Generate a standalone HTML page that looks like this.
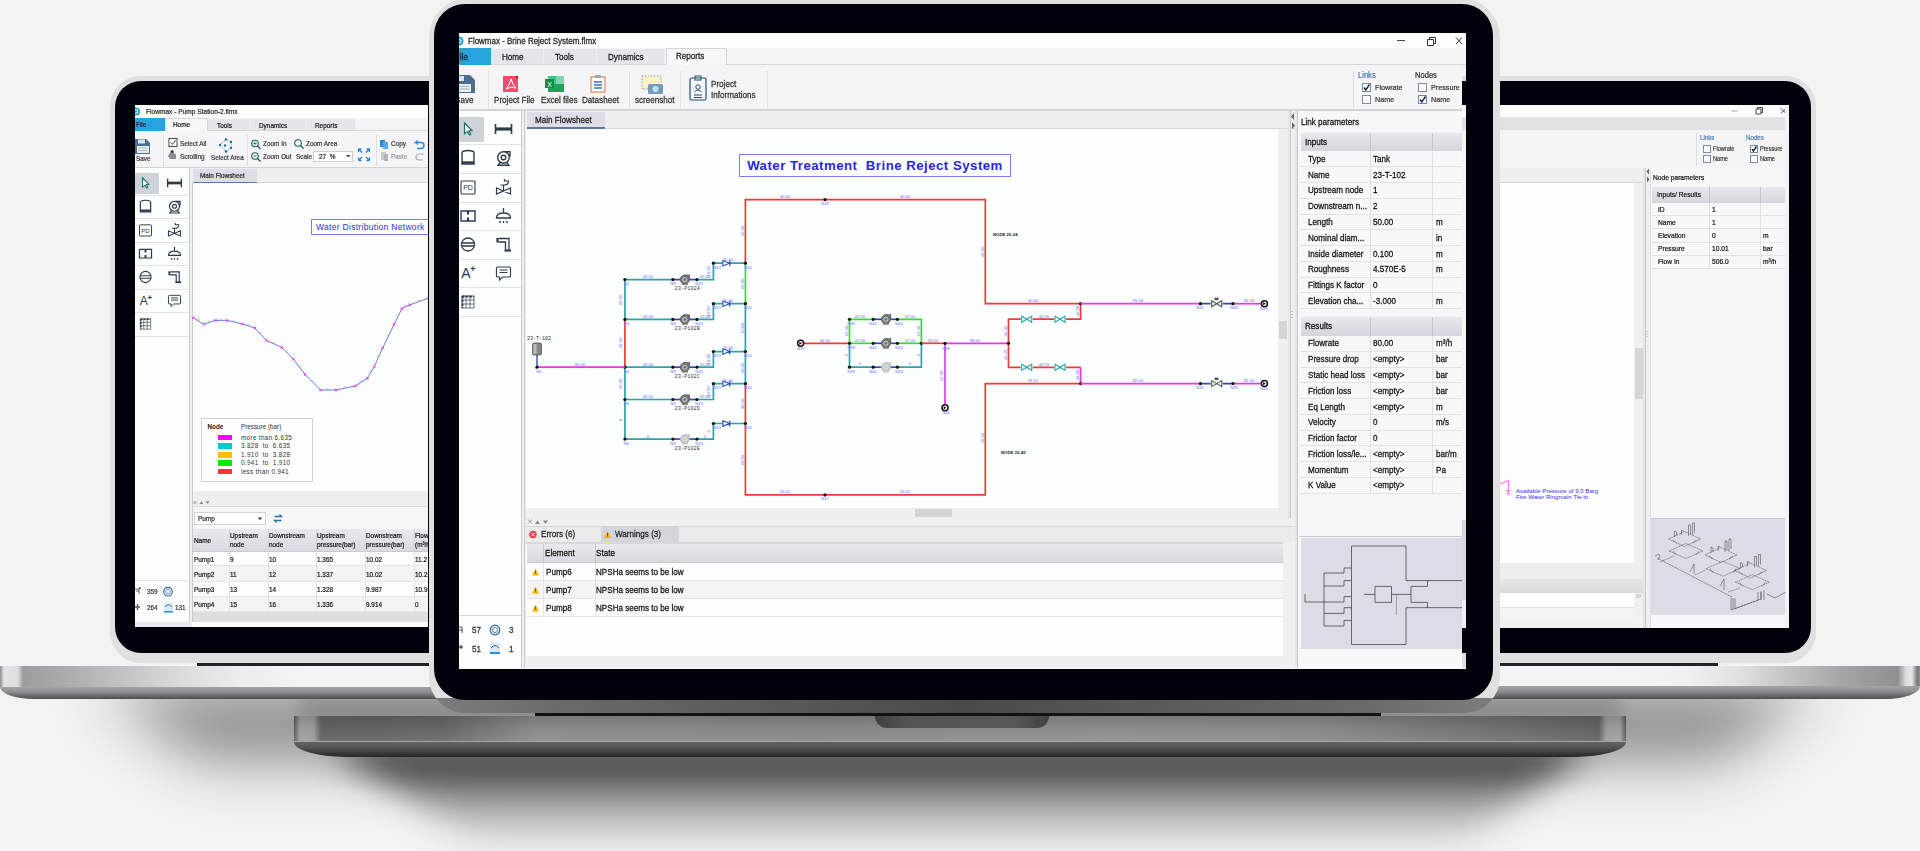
<!DOCTYPE html>
<html><head><meta charset="utf-8">
<style>
html,body{margin:0;padding:0;}
body{width:1920px;height:851px;overflow:hidden;background:#f4f3f1;position:relative;font-family:"Liberation Sans",sans-serif;}
.a{position:absolute;}
.t{position:absolute;white-space:nowrap;font-family:"Liberation Sans",sans-serif;line-height:1;}
</style></head><body>

<!-- ============ SHADOWS ============ -->
<svg class="a" style="left:0;top:666px;" width="1920" height="185" viewBox="0 666 1920 185">
  <defs>
    <filter id="sb1" x="-30%" y="-150%" width="160%" height="400%"><feGaussianBlur stdDeviation="30"/></filter>
    <filter id="sb2" x="-30%" y="-150%" width="160%" height="400%"><feGaussianBlur stdDeviation="17"/></filter>
    <filter id="sb3" x="-30%" y="-150%" width="160%" height="400%"><feGaussianBlur stdDeviation="9"/></filter>
    <linearGradient id="sg1" x1="0" y1="0" x2="0" y2="1">
      <stop offset="0" stop-color="#000" stop-opacity="0.9"/>
      <stop offset="0.35" stop-color="#000" stop-opacity="0.45"/>
      <stop offset="1" stop-color="#000" stop-opacity="0"/>
    </linearGradient>
  </defs>
  <polygon points="100,688 1820,688 1720,760 200,760" fill="rgba(0,0,0,0.44)" filter="url(#sb1)"/>
  <polygon points="330,748 1590,748 1450,850 490,850" fill="url(#sg1)" filter="url(#sb2)"/>
  <rect x="300" y="694" width="1320" height="24" fill="rgba(0,0,0,0.16)" filter="url(#sb3)"/>
</svg>
<!-- ============ LEFT LAPTOP ============ -->
<div class="a" id="left-base" style="left:0;top:666px;width:900px;height:33px;">
  <div class="a" style="left:0;top:0;width:900px;height:21px;background:linear-gradient(90deg,#8c8d91 0px,#e4e5e7 4px,#dcdde0 18px,#9b9ca0 23px,#b4b5b8 90px,#d6d7d9 170px,#eceded 240px,#f4f4f4 300px);"></div>
  <div class="a" style="left:0;top:21px;width:900px;height:12px;background:linear-gradient(180deg,#a2a4a8 0%,#8f9094 40%,#4c4d51 100%);border-bottom-left-radius:34px 12px;"></div>
</div>
<div class="a" style="left:197px;top:663px;width:600px;height:3px;background:#23232a;"></div>
<div class="a" id="left-rim" style="left:110px;top:76px;width:700px;height:587px;background:#e0e0e0;border-radius:31px;"></div>
<div class="a" id="left-bezel" style="left:115px;top:81px;width:700px;height:572px;background:#02020d;border-radius:26px;"></div>
<div class="a" id="left-screen" style="left:135px;top:105px;width:293px;height:522px;background:#fbfcfc;overflow:hidden;"><div class="a" style="left:-135px;top:-105px;width:1920px;height:851px;">
<div class="a" style="left:135px;top:105px;width:293px;height:13px;background:#fdfdfe;"></div><svg class="a" style="left:0px;top:0px;overflow:visible" width="1920" height="851" viewBox="0 0 1920 851"><circle cx="136" cy="111.5" r="4" fill="#2a9fd8"/><circle cx="136" cy="111.5" r="1.8" fill="none" stroke="#fff" stroke-width="0.9"/></svg><div class="t" style="left:145.5px;top:108.17px;font-size:7.415730337078651px;color:#222;transform:scaleX(0.890);transform-origin:0 0;-webkit-text-stroke:0.208px #222;">Flowmax - Pump Station-2.flmx</div><div class="a" style="left:135px;top:118px;width:293px;height:13px;background:#f4f4f7;"></div><div class="a" style="left:135px;top:130px;width:293px;height:1px;background:#d7d8dc;"></div><div class="a" style="left:135px;top:118px;width:30px;height:13px;background:#29a3dd;"></div><div class="t" style="left:135.5px;top:121.48px;font-size:7.191011235955057px;color:#10233a;transform:scaleX(0.890);transform-origin:0 0;-webkit-text-stroke:0.201px #10233a;">File</div><div class="a" style="left:165px;top:118px;width:43px;height:13px;background:#f7f7fa;border:1px solid #d5d6da;border-bottom:none;box-sizing:border-box;"></div><div class="t" style="left:172.7px;top:120.98px;font-size:7.191011235955057px;color:#111;transform:scaleX(0.890);transform-origin:0 0;-webkit-text-stroke:0.201px #111;">Home</div><div class="a" style="left:208px;top:119px;width:43px;height:11px;background:#e5e6eb;border-right:1px solid #eef0f3;box-sizing:border-box;"></div><div class="t" style="left:216.8px;top:121.78px;font-size:7.191011235955057px;color:#111;transform:scaleX(0.890);transform-origin:0 0;-webkit-text-stroke:0.201px #111;">Tools</div><div class="a" style="left:251px;top:119px;width:56px;height:11px;background:#e5e6eb;border-right:1px solid #eef0f3;box-sizing:border-box;"></div><div class="t" style="left:259px;top:121.78px;font-size:7.191011235955057px;color:#111;transform:scaleX(0.890);transform-origin:0 0;-webkit-text-stroke:0.201px #111;">Dynamics</div><div class="a" style="left:307px;top:119px;width:49px;height:11px;background:#e5e6eb;border-right:1px solid #eef0f3;box-sizing:border-box;"></div><div class="t" style="left:314.6px;top:121.78px;font-size:7.191011235955057px;color:#111;transform:scaleX(0.890);transform-origin:0 0;-webkit-text-stroke:0.201px #111;">Reports</div><div class="a" style="left:135px;top:131px;width:293px;height:36px;background:#f5f5f8;"></div><div class="a" style="left:135px;top:166.5px;width:293px;height:1.5px;background:#d3d4d8;"></div><div class="a" style="left:162.5px;top:135px;width:1px;height:31px;background:#dfe0e4;"></div><div class="a" style="left:246.5px;top:135px;width:1px;height:31px;background:#dfe0e4;"></div><div class="a" style="left:375.5px;top:135px;width:1px;height:31px;background:#dfe0e4;"></div><svg class="a" style="left:0px;top:0px;overflow:visible" width="1920" height="851" viewBox="0 0 1920 851"><path d="M131,139 H146 L150,143 V154 H131 Z" fill="#4e6e8e"/><rect x="138" y="139.5" width="7" height="4" fill="#dbe4ee"/><rect x="137" y="146" width="12" height="7" fill="#e9eef3"/><path d="M138.5,148 H147.5 M138.5,150.5 H147.5" stroke="#8aa" stroke-width="0.7"/></svg><div class="t" style="left:135.5px;top:155.28px;font-size:7.191011235955057px;color:#333;transform:scaleX(0.890);transform-origin:0 0;-webkit-text-stroke:0.201px #333;">Save</div><svg class="a" style="left:0px;top:0px;overflow:visible" width="1920" height="851" viewBox="0 0 1920 851"><rect x="169" y="138.5" width="8" height="8" fill="#fff" stroke="#444" stroke-width="1"/><path d="M171,142.5 L172.5,144.5 L175.5,140" stroke="#333" stroke-width="0.9" fill="none"/><path d="M171,151 q1.5,-1 3,0 v3 h2 v5 h-6 l-2,-3 z" fill="#8a8f96"/><circle cx="172" cy="151.5" r="1.3" fill="#333"/></svg><div class="t" style="left:180px;top:139.68px;font-size:7.191011235955057px;color:#333;transform:scaleX(0.890);transform-origin:0 0;-webkit-text-stroke:0.201px #333;">Select All</div><div class="t" style="left:180px;top:153.48px;font-size:7.191011235955057px;color:#333;transform:scaleX(0.890);transform-origin:0 0;-webkit-text-stroke:0.201px #333;">Scrolling</div><svg class="a" style="left:0px;top:0px;overflow:visible" width="1920" height="851" viewBox="0 0 1920 851"><path d="M226,139.5 L231,142 L231,148 L226,151.5 L220,145 Z" fill="none" stroke="#1f6f8a" stroke-width="0.7" stroke-dasharray="1,1"/><circle cx="226" cy="139.5" r="1.2" fill="#1f6f8a"/><circle cx="231" cy="142" r="1.2" fill="#1f6f8a"/><circle cx="231" cy="148" r="1.2" fill="#1f6f8a"/><circle cx="226" cy="151.5" r="1.2" fill="#1f6f8a"/><circle cx="220" cy="145" r="1.2" fill="#1f6f8a"/><circle cx="225" cy="145.5" r="1.2" fill="#1f6f8a"/></svg><div class="t" style="left:210.8px;top:154.48px;font-size:7.191011235955057px;color:#333;transform:scaleX(0.890);transform-origin:0 0;-webkit-text-stroke:0.201px #333;">Select Area</div><svg class="a" style="left:0px;top:0px;overflow:visible" width="1920" height="851" viewBox="0 0 1920 851"><circle cx="255" cy="143.5" r="3.3" fill="none" stroke="#1f6060" stroke-width="1.1"/><path d="M257.5,146 L260.5,149" stroke="#1f6060" stroke-width="1.4"/><path d="M253.3,143.5 h3.4 M255,141.8 v3.4" stroke="#1f6060" stroke-width="0.8"/><circle cx="255" cy="156" r="3.3" fill="none" stroke="#1f6060" stroke-width="1.1"/><path d="M257.5,158.5 L260.5,161.5" stroke="#1f6060" stroke-width="1.4"/><path d="M253.3,156 h3.4" stroke="#1f6060" stroke-width="0.8"/><circle cx="298" cy="143" r="3.3" fill="none" stroke="#1f6060" stroke-width="1.1"/><path d="M300.5,145.5 L303.5,148.5" stroke="#1f6060" stroke-width="1.4"/></svg><div class="t" style="left:262.5px;top:140.48px;font-size:7.191011235955057px;color:#333;transform:scaleX(0.890);transform-origin:0 0;-webkit-text-stroke:0.201px #333;">Zoom In</div><div class="t" style="left:262.5px;top:153.48px;font-size:7.191011235955057px;color:#333;transform:scaleX(0.890);transform-origin:0 0;-webkit-text-stroke:0.201px #333;">Zoom Out</div><div class="t" style="left:305.5px;top:139.78px;font-size:7.191011235955057px;color:#333;transform:scaleX(0.890);transform-origin:0 0;-webkit-text-stroke:0.201px #333;">Zoom Area</div><div class="t" style="left:295.5px;top:153.48px;font-size:7.191011235955057px;color:#333;transform:scaleX(0.890);transform-origin:0 0;-webkit-text-stroke:0.201px #333;">Scale</div><div class="a" style="left:313px;top:151px;width:40px;height:11px;background:#fff;border:1px solid #cfd0d4;box-sizing:border-box;"></div><div class="t" style="left:318.8px;top:152.98px;font-size:7.191011235955057px;color:#222;transform:scaleX(0.890);transform-origin:0 0;-webkit-text-stroke:0.201px #222;">27 &nbsp;%</div><svg class="a" style="left:0px;top:0px;overflow:visible" width="1920" height="851" viewBox="0 0 1920 851"><path d="M346,155 h4.5 l-2.25,2.5 z" fill="#444"/><path d="M358.5,149 l3.5,3.5 M358.5,149 h3 M358.5,149 v3 M369.5,149 l-3.5,3.5 M369.5,149 h-3 M369.5,149 v3 M358.5,160.5 l3.5,-3.5 M358.5,160.5 h3 M358.5,160.5 v-3 M369.5,160.5 l-3.5,-3.5 M369.5,160.5 h-3 M369.5,160.5 v-3" stroke="#2a86d6" stroke-width="1.3" fill="none"/><rect x="380" y="140" width="5" height="7" fill="#2a86d6"/><rect x="383" y="142" width="5" height="7" fill="#5aaae6"/><rect x="381" y="152" width="5" height="8" fill="#c6c8cc"/><rect x="384" y="154" width="4" height="7" fill="#b0b3b8"/><path d="M416,142.5 h5 a3,3 0 0 1 0,6 h-4" stroke="#2a86d6" stroke-width="1.3" fill="none"/><path d="M418,140.5 l-3,2 l3,2" stroke="#2a86d6" stroke-width="1.1" fill="none"/><path d="M424,154 h-5 a3,3 0 0 0 0,6 h4" stroke="#a8b0b8" stroke-width="1.1" fill="none"/></svg><div class="t" style="left:391px;top:140.48px;font-size:7.191011235955057px;color:#333;transform:scaleX(0.890);transform-origin:0 0;-webkit-text-stroke:0.201px #333;">Copy</div><div class="t" style="left:391px;top:153.48px;font-size:7.191011235955057px;color:#9a9a9a;transform:scaleX(0.890);transform-origin:0 0;-webkit-text-stroke:0.201px #9a9a9a;">Paste</div><div class="a" style="left:135px;top:168px;width:293px;height:459px;background:#efeff1;"></div><div class="a" style="left:135px;top:168px;width:54px;height:454px;background:#fcfdfd;"></div><div class="a" style="left:189px;top:168px;width:1px;height:459px;background:#c9cacc;"></div><div class="a" style="left:190px;top:168px;width:1.5px;height:459px;background:#f0f0f0;"></div><div class="a" style="left:191.5px;top:168px;width:0.8px;height:459px;background:#c9cacc;"></div><div class="a" style="left:135px;top:172.6px;width:23.5px;height:21px;background:#cdd3d6;"></div><div class="a" style="left:135px;top:195px;width:54px;height:1px;background:#e3e4e6;"></div><div class="a" style="left:135px;top:218.3px;width:54px;height:1px;background:#e3e4e6;"></div><div class="a" style="left:135px;top:242px;width:54px;height:1px;background:#e3e4e6;"></div><div class="a" style="left:135px;top:265.3px;width:54px;height:1px;background:#e3e4e6;"></div><div class="a" style="left:135px;top:288.6px;width:54px;height:1px;background:#e3e4e6;"></div><div class="a" style="left:135px;top:312.4px;width:54px;height:1px;background:#e3e4e6;"></div><div class="a" style="left:135px;top:335.6px;width:54px;height:1px;background:#e3e4e6;"></div><div class="a" style="left:135px;top:579.6px;width:54px;height:1px;background:#e3e4e6;"></div><svg class="a" style="left:0px;top:0px;overflow:visible" width="1920" height="851" viewBox="0 0 1920 851"><g transform="translate(145.5,183) scale(0.86)"><path d="M-3.5,-6 L4,1.5 L1,1.8 L2.8,5.3 L1.4,6 L-0.4,2.6 L-3.5,4.6 Z" fill="#fff" stroke="#1f6f6a" stroke-width="1.2"/></g><g transform="translate(174.5,183) scale(0.86)"><path d="M-8,-5 V5 M8,-5 V5" stroke="#2e3b4b" fill="none" stroke-width="1.6"/></g><g transform="translate(174.5,183) scale(0.86)"><path d="M-8,0 H8" stroke="#2e3b4b" fill="none" stroke-width="3.2"/></g><g transform="translate(145.5,206.7) scale(0.86)"><path d="M-6,-5 Q-6,-7.5 0,-7.5 Q6,-7.5 6,-5 V6 H-6 Z" stroke="#2e3b4b" fill="none" stroke-width="1.4"/></g><g transform="translate(145.5,206.7) scale(0.86)"><path d="M-6,4.5 H6" stroke="#2e3b4b" fill="none" stroke-width="2.4"/></g><g transform="translate(174.5,206.7) scale(0.86)"><path d="M-5.8,-0.5 a5.8,5.8 0 1 0 11.6,0 a5.8,5.8 0 1 0 -11.6,0 M0,-6.3 H6.5 V-2.2 H5 M-2.3,-0.5 a2.3,2.3 0 1 0 4.6,0 a2.3,2.3 0 1 0 -4.6,0 M-3.5,4.6 L-5.5,7.3 H5.5 L3.5,4.6" stroke="#2e3b4b" fill="none" stroke-width="1.4"/></g><g transform="translate(145.5,230) scale(0.86)"><path d="M-6,-6 H6 Q7,-6 7,-5 V6 Q7,7 6,7 H-6 Q-7,7 -7,6 V-5 Q-7,-6 -6,-6 Z" stroke="#2e3b4b" fill="none" stroke-width="1.1"/></g><text x="145.5" y="232.6" font-size="6.02" font-family="Liberation Sans" text-anchor="middle" fill="#2e3b4b">PD</text><g transform="translate(174.5,230) scale(0.86)"><path d="M-7,1 L7,7 V1 L-7,7 Z M0,4 V-2 M-3,-2 H3 M1,-2 Q5,-2 5,-6 H1 V-8" stroke="#2e3b4b" fill="none" stroke-width="1.2"/></g><g transform="translate(145.5,253.7) scale(0.86)"><path d="M-7,-5 H7 V5 H-7 Z" stroke="#2e3b4b" fill="none" stroke-width="1.4"/></g><g transform="translate(145.5,253.7) scale(0.86)"><path d="M0,-5 V-1.5 M0,1.5 V5" stroke="#2e3b4b" fill="none" stroke-width="2.2"/></g><g transform="translate(174.5,253.7) scale(0.86)"><path d="M0,-8 V-3 M-7,2 Q-7,-3 0,-3 Q7,-3 7,2 Z M-3,5 L-4,7 M0,5 V7 M3,5 L4,7" stroke="#2e3b4b" fill="none" stroke-width="1.3"/></g><g transform="translate(145.5,277) scale(0.86)"><path d="M-6.5,0 A6.5,6.5 0 1 0 6.5,0 A6.5,6.5 0 1 0 -6.5,0 M-6.5,-1.5 H6.5 M-6.5,1.5 H6.5" stroke="#2e3b4b" fill="none" stroke-width="1.3"/></g><g transform="translate(174.5,277) scale(0.86)"><path d="M-6,-6.5 V-2" stroke="#2e3b4b" fill="none" stroke-width="2.2"/></g><g transform="translate(174.5,277) scale(0.86)"><path d="M-5,-6 H5.5 V5 M-5,-2.5 H2 V5" stroke="#2e3b4b" fill="none" stroke-width="1.3"/></g><g transform="translate(174.5,277) scale(0.86)"><path d="M1,6 H7.5" stroke="#2e3b4b" fill="none" stroke-width="2.2"/></g><text x="143.78" y="304.8" font-size="12.04" font-family="Liberation Sans" text-anchor="middle" fill="#2e3b4b">A</text><text x="149.8" y="299.64" font-size="7.74" font-family="Liberation Sans" font-weight="bold" text-anchor="middle" fill="#2e3b4b">+</text><g transform="translate(174.5,300.5) scale(0.86)"><path d="M-6,-6 H6 Q7,-6 7,-5 V3 Q7,4 6,4 H-1 L-4,7 V4 H-6 Q-7,4 -7,3 V-5 Q-7,-6 -6,-6 Z M-4,-3 H4 M-4,-0.5 H4" stroke="#2e3b4b" fill="none" stroke-width="1.1"/></g><g transform="translate(145.5,324) scale(0.86)"><path d="M-6,-6 H6 V6 H-6 Z M-6,-2 H6 M-6,2 H6 M-2,-6 V6 M2,-6 V6" stroke="#2e3b4b" fill="none" stroke-width="0.7"/></g><g transform="translate(145.5,324) scale(0.86)"><path d="M-5.5,-6 V6 M-6,-5.5 H6" stroke="#2e3b4b" fill="none" stroke-width="1.8" stroke-dasharray="2.5,1.2"/></g></svg><div class="a" style="left:135px;top:622px;width:56px;height:5px;background:#e9e9f1;"></div><svg class="a" style="left:0px;top:0px;overflow:visible" width="1920" height="851" viewBox="0 0 1920 851"><path d="M135,589 h4 v5 M136,591 h3" stroke="#556" stroke-width="0.9" fill="none"/><path d="M139,587.5 h2 v1.5 h-2z" fill="#556"/><circle cx="168" cy="591.7" r="4.3" fill="none" stroke="#2b5d9a" stroke-width="1.1"/><circle cx="168" cy="591.7" r="2.3" fill="none" stroke="#2b5d9a" stroke-width="0.7"/><path d="M135,607 h5 M137.5,604 v6" stroke="#556" stroke-width="1.4"/><rect x="164" y="603" width="9" height="9" fill="#dbe8f5"/><path d="M165,607 Q168.5,602.5 172,607" stroke="#2b5d9a" stroke-width="0.9" fill="none"/><rect x="164" y="611" width="9" height="1.6" fill="#2a8ee0"/></svg><div class="t" style="left:147px;top:588.28px;font-size:7.191011235955057px;color:#333;transform:scaleX(0.890);transform-origin:0 0;-webkit-text-stroke:0.201px #333;">359</div><div class="t" style="left:147px;top:603.78px;font-size:7.191011235955057px;color:#333;transform:scaleX(0.890);transform-origin:0 0;-webkit-text-stroke:0.201px #333;">264</div><div class="t" style="left:174.5px;top:603.78px;font-size:7.191011235955057px;color:#333;transform:scaleX(0.890);transform-origin:0 0;-webkit-text-stroke:0.201px #333;">131</div><div class="a" style="left:192px;top:168px;width:236px;height:15px;background:#efeff1;"></div><div class="a" style="left:193px;top:169px;width:64px;height:13px;background:#dcdde6;"></div><div class="a" style="left:193px;top:181.5px;width:64px;height:1.5px;background:#5a78ac;"></div><div class="a" style="left:257px;top:182.2px;width:171px;height:0.8px;background:#d8d9dd;"></div><div class="t" style="left:199.5px;top:172.28px;font-size:7.191011235955057px;color:#222;transform:scaleX(0.890);transform-origin:0 0;-webkit-text-stroke:0.201px #222;">Main Flowsheet</div><div class="a" style="left:192.5px;top:183px;width:236px;height:308px;background:#fcfdfd;"></div><div class="a" style="left:310.5px;top:219.3px;width:120px;height:15.5px;border:1px solid #7c7cf2;box-sizing:border-box;background:#fdfdff;"></div><div class="t" style="left:316px;top:223.03px;font-size:8.5px;color:#3030e0;letter-spacing:0.3px;">Water Distribution Network</div><svg class="a" style="left:0px;top:0px;overflow:visible" width="1920" height="851" viewBox="0 0 1920 851"><path d="M193.3,317.8 L203.7,324.3 L215.3,320.4 L227,320.4 L242.5,324 L254.9,328.1 L266.2,340.3 L281.8,347.5 L293.4,359.2 L305,374.4 L320.5,390 L336,390 L355.4,386 L367.3,378.3 L374.3,366.7 L382.6,348 L394.2,324.3 L402,308.5 L409.7,304.9 L428.6,298.1" stroke="#5a6cd6" stroke-width="0.9" fill="none"/><path d="M192.0,316.5 L194.60000000000002,319.1 M194.60000000000002,316.5 L192.0,319.1" stroke="#ff22ff" stroke-width="0.9"/><path d="M196.5,319.85 h3" stroke="#9aa" stroke-width="0.6"/><path d="M202.39999999999998,323.0 L205.0,325.6 M205.0,323.0 L202.39999999999998,325.6" stroke="#ff22ff" stroke-width="0.9"/><path d="M207.5,321.15000000000003 h3" stroke="#9aa" stroke-width="0.6"/><path d="M214.0,319.09999999999997 L216.60000000000002,321.7 M216.60000000000002,319.09999999999997 L214.0,321.7" stroke="#ff22ff" stroke-width="0.9"/><path d="M219.15,319.2 h3" stroke="#9aa" stroke-width="0.6"/><path d="M225.7,319.09999999999997 L228.3,321.7 M228.3,319.09999999999997 L225.7,321.7" stroke="#ff22ff" stroke-width="0.9"/><path d="M232.75,321.0 h3" stroke="#9aa" stroke-width="0.6"/><path d="M241.2,322.7 L243.8,325.3 M243.8,322.7 L241.2,325.3" stroke="#ff22ff" stroke-width="0.9"/><path d="M246.7,324.85 h3" stroke="#9aa" stroke-width="0.6"/><path d="M253.6,326.8 L256.2,329.40000000000003 M256.2,326.8 L253.6,329.40000000000003" stroke="#ff22ff" stroke-width="0.9"/><path d="M258.55,333.00000000000006 h3" stroke="#9aa" stroke-width="0.6"/><path d="M264.9,339.0 L267.5,341.6 M267.5,339.0 L264.9,341.6" stroke="#ff22ff" stroke-width="0.9"/><path d="M272.0,342.7 h3" stroke="#9aa" stroke-width="0.6"/><path d="M280.5,346.2 L283.1,348.8 M283.1,346.2 L280.5,348.8" stroke="#ff22ff" stroke-width="0.9"/><path d="M285.6,352.15000000000003 h3" stroke="#9aa" stroke-width="0.6"/><path d="M292.09999999999997,357.9 L294.7,360.5 M294.7,357.9 L292.09999999999997,360.5" stroke="#ff22ff" stroke-width="0.9"/><path d="M297.2,365.59999999999997 h3" stroke="#9aa" stroke-width="0.6"/><path d="M303.7,373.09999999999997 L306.3,375.7 M306.3,373.09999999999997 L303.7,375.7" stroke="#ff22ff" stroke-width="0.9"/><path d="M310.75,381.0 h3" stroke="#9aa" stroke-width="0.6"/><path d="M319.2,388.7 L321.8,391.3 M321.8,388.7 L319.2,391.3" stroke="#ff22ff" stroke-width="0.9"/><path d="M326.25,388.8 h3" stroke="#9aa" stroke-width="0.6"/><path d="M334.7,388.7 L337.3,391.3 M337.3,388.7 L334.7,391.3" stroke="#ff22ff" stroke-width="0.9"/><path d="M343.7,386.8 h3" stroke="#9aa" stroke-width="0.6"/><path d="M354.09999999999997,384.7 L356.7,387.3 M356.7,384.7 L354.09999999999997,387.3" stroke="#ff22ff" stroke-width="0.9"/><path d="M359.35,380.95 h3" stroke="#9aa" stroke-width="0.6"/><path d="M366.0,377.0 L368.6,379.6 M368.6,377.0 L366.0,379.6" stroke="#ff22ff" stroke-width="0.9"/><path d="M368.8,371.3 h3" stroke="#9aa" stroke-width="0.6"/><path d="M373.0,365.4 L375.6,368.0 M375.6,365.4 L373.0,368.0" stroke="#ff22ff" stroke-width="0.9"/><path d="M376.45000000000005,356.15000000000003 h3" stroke="#9aa" stroke-width="0.6"/><path d="M381.3,346.7 L383.90000000000003,349.3 M383.90000000000003,346.7 L381.3,349.3" stroke="#ff22ff" stroke-width="0.9"/><path d="M386.4,334.95 h3" stroke="#9aa" stroke-width="0.6"/><path d="M392.9,323.0 L395.5,325.6 M395.5,323.0 L392.9,325.6" stroke="#ff22ff" stroke-width="0.9"/><path d="M396.1,315.2 h3" stroke="#9aa" stroke-width="0.6"/><path d="M400.7,307.2 L403.3,309.8 M403.3,307.2 L400.7,309.8" stroke="#ff22ff" stroke-width="0.9"/><path d="M403.85,305.5 h3" stroke="#9aa" stroke-width="0.6"/><path d="M408.4,303.59999999999997 L411.0,306.2 M411.0,303.59999999999997 L408.4,306.2" stroke="#ff22ff" stroke-width="0.9"/><path d="M417.15,300.3 h3" stroke="#9aa" stroke-width="0.6"/><path d="M427.3,296.8 L429.90000000000003,299.40000000000003 M429.90000000000003,296.8 L427.3,299.40000000000003" stroke="#ff22ff" stroke-width="0.9"/></svg><div class="a" style="left:201.4px;top:418.3px;width:112px;height:64px;border:1px solid #d2d2d2;box-sizing:border-box;background:#fdfdfd;"></div><div class="t" style="left:207.5px;top:424.21px;font-size:6.3px;color:#222;font-weight:bold;">Node</div><div class="t" style="left:241px;top:424.21px;font-size:6.3px;color:#333;">Pressure (bar)</div><div class="a" style="left:218px;top:434.9px;width:14px;height:5.6px;background:#ff00ff;"></div><div class="t" style="left:241px;top:434.81px;font-size:6.3px;color:#333;letter-spacing:0.35px;">more than 6.635</div><div class="a" style="left:218px;top:443.2px;width:14px;height:5.6px;background:#00cccc;"></div><div class="t" style="left:241px;top:443.11px;font-size:6.3px;color:#333;letter-spacing:0.35px;">3.828 &nbsp;to &nbsp;6.635</div><div class="a" style="left:218px;top:452px;width:14px;height:5.6px;background:#ffbf00;"></div><div class="t" style="left:241px;top:451.91px;font-size:6.3px;color:#333;letter-spacing:0.35px;">1.910 &nbsp;to &nbsp;3.828</div><div class="a" style="left:218px;top:460.1px;width:14px;height:5.6px;background:#00ee00;"></div><div class="t" style="left:241px;top:460.01px;font-size:6.3px;color:#333;letter-spacing:0.35px;">0.941 &nbsp;to &nbsp;1.910</div><div class="a" style="left:218px;top:468.6px;width:14px;height:5.6px;background:#ff3333;"></div><div class="t" style="left:241px;top:468.51px;font-size:6.3px;color:#333;letter-spacing:0.35px;">less than 0.941</div><div class="a" style="left:192.5px;top:491px;width:236px;height:15px;background:#efeff1;"></div><svg class="a" style="left:0px;top:0px;overflow:visible" width="1920" height="851" viewBox="0 0 1920 851"><path d="M193.5,501 l3,3 M196.5,501 l-3,3" stroke="#888" stroke-width="0.7"/><path d="M199.5,504 l2,-2.8 l2,2.8 z M205.5,501.2 l2,2.8 l2,-2.8 z" fill="#888"/></svg><div class="a" style="left:192.5px;top:506px;width:236px;height:1px;background:#dcdcdf;"></div><div class="a" style="left:192.5px;top:507px;width:236px;height:115px;background:#f6f6f8;"></div><div class="a" style="left:193.5px;top:512.3px;width:72px;height:12.4px;background:#fff;border:1px solid #d2d3d7;box-sizing:border-box;"></div><div class="t" style="left:198px;top:515.08px;font-size:7.191011235955057px;color:#222;transform:scaleX(0.890);transform-origin:0 0;-webkit-text-stroke:0.201px #222;">Pump</div><svg class="a" style="left:0px;top:0px;overflow:visible" width="1920" height="851" viewBox="0 0 1920 851"><path d="M257.5,517.5 h5 l-2.5,2.8 z" fill="#555"/><path d="M274.5,516.5 h7 l-2,-2 M281.5,520.5 h-7 l2,2" stroke="#2f6fa0" stroke-width="1.3" fill="none"/></svg><div class="a" style="left:192.7px;top:529px;width:236px;height:22px;background:linear-gradient(180deg,#e9eaef,#d9dae1);"></div><div class="a" style="left:192.7px;top:551px;width:236px;height:0.8px;background:#c9cad0;"></div><div class="a" style="left:229px;top:529px;width:0.8px;height:83px;background:#d3d4d9;"></div><div class="a" style="left:268.2px;top:529px;width:0.8px;height:83px;background:#d3d4d9;"></div><div class="a" style="left:316.2px;top:529px;width:0.8px;height:83px;background:#d3d4d9;"></div><div class="a" style="left:365.1px;top:529px;width:0.8px;height:83px;background:#d3d4d9;"></div><div class="a" style="left:414.2px;top:529px;width:0.8px;height:83px;background:#d3d4d9;"></div><div class="t" style="left:193.5px;top:536.68px;font-size:7.191011235955057px;color:#111;transform:scaleX(0.890);transform-origin:0 0;-webkit-text-stroke:0.201px #111;">Name</div><div class="t" style="left:230px;top:532.28px;font-size:7.191011235955057px;color:#111;transform:scaleX(0.890);transform-origin:0 0;-webkit-text-stroke:0.201px #111;">Upstream</div><div class="t" style="left:230px;top:541.18px;font-size:7.191011235955057px;color:#111;transform:scaleX(0.890);transform-origin:0 0;-webkit-text-stroke:0.201px #111;">node</div><div class="t" style="left:269.2px;top:532.28px;font-size:7.191011235955057px;color:#111;transform:scaleX(0.890);transform-origin:0 0;-webkit-text-stroke:0.201px #111;">Downstream</div><div class="t" style="left:269.2px;top:541.18px;font-size:7.191011235955057px;color:#111;transform:scaleX(0.890);transform-origin:0 0;-webkit-text-stroke:0.201px #111;">node</div><div class="t" style="left:317.2px;top:532.28px;font-size:7.191011235955057px;color:#111;transform:scaleX(0.890);transform-origin:0 0;-webkit-text-stroke:0.201px #111;">Upstream</div><div class="t" style="left:317.2px;top:541.18px;font-size:7.191011235955057px;color:#111;transform:scaleX(0.890);transform-origin:0 0;-webkit-text-stroke:0.201px #111;">pressure(bar)</div><div class="t" style="left:366.1px;top:532.28px;font-size:7.191011235955057px;color:#111;transform:scaleX(0.890);transform-origin:0 0;-webkit-text-stroke:0.201px #111;">Downstream</div><div class="t" style="left:366.1px;top:541.18px;font-size:7.191011235955057px;color:#111;transform:scaleX(0.890);transform-origin:0 0;-webkit-text-stroke:0.201px #111;">pressure(bar)</div><div class="t" style="left:415.2px;top:532.28px;font-size:7.191011235955057px;color:#111;transform:scaleX(0.890);transform-origin:0 0;-webkit-text-stroke:0.201px #111;">Flow</div><div class="t" style="left:415.2px;top:541.18px;font-size:7.191011235955057px;color:#111;transform:scaleX(0.890);transform-origin:0 0;-webkit-text-stroke:0.201px #111;">(m³/h)</div><div class="a" style="left:192.7px;top:551.8px;width:236px;height:14.700000000000045px;background:#fdfdfd;border-bottom:1px solid #e6e6e8;box-sizing:border-box;"></div><div class="a" style="left:229px;top:551.8px;width:0.8px;height:14.700000000000045px;background:#e3e3e5;"></div><div class="a" style="left:268.2px;top:551.8px;width:0.8px;height:14.700000000000045px;background:#e3e3e5;"></div><div class="a" style="left:316.2px;top:551.8px;width:0.8px;height:14.700000000000045px;background:#e3e3e5;"></div><div class="a" style="left:365.1px;top:551.8px;width:0.8px;height:14.700000000000045px;background:#e3e3e5;"></div><div class="a" style="left:414.2px;top:551.8px;width:0.8px;height:14.700000000000045px;background:#e3e3e5;"></div><div class="t" style="left:193.89999999999998px;top:555.63px;font-size:7.191011235955057px;color:#111;transform:scaleX(0.890);transform-origin:0 0;-webkit-text-stroke:0.201px #111;">Pump1</div><div class="t" style="left:230.2px;top:555.63px;font-size:7.191011235955057px;color:#111;transform:scaleX(0.890);transform-origin:0 0;-webkit-text-stroke:0.201px #111;">9</div><div class="t" style="left:269.4px;top:555.63px;font-size:7.191011235955057px;color:#111;transform:scaleX(0.890);transform-origin:0 0;-webkit-text-stroke:0.201px #111;">10</div><div class="t" style="left:317.4px;top:555.63px;font-size:7.191011235955057px;color:#111;transform:scaleX(0.890);transform-origin:0 0;-webkit-text-stroke:0.201px #111;">1.365</div><div class="t" style="left:366.3px;top:555.63px;font-size:7.191011235955057px;color:#111;transform:scaleX(0.890);transform-origin:0 0;-webkit-text-stroke:0.201px #111;">10.02</div><div class="t" style="left:415.4px;top:555.63px;font-size:7.191011235955057px;color:#111;transform:scaleX(0.890);transform-origin:0 0;-webkit-text-stroke:0.201px #111;">11.2</div><div class="a" style="left:192.7px;top:566.5px;width:236px;height:15.100000000000023px;background:#f3f3f4;border-bottom:1px solid #e6e6e8;box-sizing:border-box;"></div><div class="a" style="left:229px;top:566.5px;width:0.8px;height:15.100000000000023px;background:#e3e3e5;"></div><div class="a" style="left:268.2px;top:566.5px;width:0.8px;height:15.100000000000023px;background:#e3e3e5;"></div><div class="a" style="left:316.2px;top:566.5px;width:0.8px;height:15.100000000000023px;background:#e3e3e5;"></div><div class="a" style="left:365.1px;top:566.5px;width:0.8px;height:15.100000000000023px;background:#e3e3e5;"></div><div class="a" style="left:414.2px;top:566.5px;width:0.8px;height:15.100000000000023px;background:#e3e3e5;"></div><div class="t" style="left:193.89999999999998px;top:570.53px;font-size:7.191011235955057px;color:#111;transform:scaleX(0.890);transform-origin:0 0;-webkit-text-stroke:0.201px #111;">Pump2</div><div class="t" style="left:230.2px;top:570.53px;font-size:7.191011235955057px;color:#111;transform:scaleX(0.890);transform-origin:0 0;-webkit-text-stroke:0.201px #111;">11</div><div class="t" style="left:269.4px;top:570.53px;font-size:7.191011235955057px;color:#111;transform:scaleX(0.890);transform-origin:0 0;-webkit-text-stroke:0.201px #111;">12</div><div class="t" style="left:317.4px;top:570.53px;font-size:7.191011235955057px;color:#111;transform:scaleX(0.890);transform-origin:0 0;-webkit-text-stroke:0.201px #111;">1.337</div><div class="t" style="left:366.3px;top:570.53px;font-size:7.191011235955057px;color:#111;transform:scaleX(0.890);transform-origin:0 0;-webkit-text-stroke:0.201px #111;">10.02</div><div class="t" style="left:415.4px;top:570.53px;font-size:7.191011235955057px;color:#111;transform:scaleX(0.890);transform-origin:0 0;-webkit-text-stroke:0.201px #111;">10.2</div><div class="a" style="left:192.7px;top:581.6px;width:236px;height:15.0px;background:#fdfdfd;border-bottom:1px solid #e6e6e8;box-sizing:border-box;"></div><div class="a" style="left:229px;top:581.6px;width:0.8px;height:15.0px;background:#e3e3e5;"></div><div class="a" style="left:268.2px;top:581.6px;width:0.8px;height:15.0px;background:#e3e3e5;"></div><div class="a" style="left:316.2px;top:581.6px;width:0.8px;height:15.0px;background:#e3e3e5;"></div><div class="a" style="left:365.1px;top:581.6px;width:0.8px;height:15.0px;background:#e3e3e5;"></div><div class="a" style="left:414.2px;top:581.6px;width:0.8px;height:15.0px;background:#e3e3e5;"></div><div class="t" style="left:193.89999999999998px;top:585.58px;font-size:7.191011235955057px;color:#111;transform:scaleX(0.890);transform-origin:0 0;-webkit-text-stroke:0.201px #111;">Pump3</div><div class="t" style="left:230.2px;top:585.58px;font-size:7.191011235955057px;color:#111;transform:scaleX(0.890);transform-origin:0 0;-webkit-text-stroke:0.201px #111;">13</div><div class="t" style="left:269.4px;top:585.58px;font-size:7.191011235955057px;color:#111;transform:scaleX(0.890);transform-origin:0 0;-webkit-text-stroke:0.201px #111;">14</div><div class="t" style="left:317.4px;top:585.58px;font-size:7.191011235955057px;color:#111;transform:scaleX(0.890);transform-origin:0 0;-webkit-text-stroke:0.201px #111;">1.328</div><div class="t" style="left:366.3px;top:585.58px;font-size:7.191011235955057px;color:#111;transform:scaleX(0.890);transform-origin:0 0;-webkit-text-stroke:0.201px #111;">9.987</div><div class="t" style="left:415.4px;top:585.58px;font-size:7.191011235955057px;color:#111;transform:scaleX(0.890);transform-origin:0 0;-webkit-text-stroke:0.201px #111;">10.9</div><div class="a" style="left:192.7px;top:596.6px;width:236px;height:15.399999999999977px;background:#f3f3f4;border-bottom:1px solid #e6e6e8;box-sizing:border-box;"></div><div class="a" style="left:229px;top:596.6px;width:0.8px;height:15.399999999999977px;background:#e3e3e5;"></div><div class="a" style="left:268.2px;top:596.6px;width:0.8px;height:15.399999999999977px;background:#e3e3e5;"></div><div class="a" style="left:316.2px;top:596.6px;width:0.8px;height:15.399999999999977px;background:#e3e3e5;"></div><div class="a" style="left:365.1px;top:596.6px;width:0.8px;height:15.399999999999977px;background:#e3e3e5;"></div><div class="a" style="left:414.2px;top:596.6px;width:0.8px;height:15.399999999999977px;background:#e3e3e5;"></div><div class="t" style="left:193.89999999999998px;top:600.78px;font-size:7.191011235955057px;color:#111;transform:scaleX(0.890);transform-origin:0 0;-webkit-text-stroke:0.201px #111;">Pump4</div><div class="t" style="left:230.2px;top:600.78px;font-size:7.191011235955057px;color:#111;transform:scaleX(0.890);transform-origin:0 0;-webkit-text-stroke:0.201px #111;">15</div><div class="t" style="left:269.4px;top:600.78px;font-size:7.191011235955057px;color:#111;transform:scaleX(0.890);transform-origin:0 0;-webkit-text-stroke:0.201px #111;">16</div><div class="t" style="left:317.4px;top:600.78px;font-size:7.191011235955057px;color:#111;transform:scaleX(0.890);transform-origin:0 0;-webkit-text-stroke:0.201px #111;">1.336</div><div class="t" style="left:366.3px;top:600.78px;font-size:7.191011235955057px;color:#111;transform:scaleX(0.890);transform-origin:0 0;-webkit-text-stroke:0.201px #111;">9.914</div><div class="t" style="left:415.4px;top:600.78px;font-size:7.191011235955057px;color:#111;transform:scaleX(0.890);transform-origin:0 0;-webkit-text-stroke:0.201px #111;">0</div><div class="a" style="left:192.7px;top:612px;width:236px;height:9.5px;background:#dedfe1;"></div><div class="a" style="left:191.5px;top:621.5px;width:237px;height:5.5px;background:#fdfdfd;"></div>
</div></div>

<!-- ============ RIGHT LAPTOP ============ -->
<div class="a" id="right-base" style="left:1020px;top:666px;width:900px;height:33px;">
  <div class="a" style="left:0;top:0;width:900px;height:20px;background:linear-gradient(270deg,#8c8d91 0px,#7a7b7f 3px,#e4e5e7 8px,#dcdde0 14px,#8f9094 22px,#9c9da0 60px,#bbbcbe 120px,#dfe0e1 180px,#f0f0f0 230px,#f4f4f4 300px);"></div>
  <div class="a" style="left:0;top:20px;width:900px;height:13px;background:linear-gradient(180deg,#a2a4a8 0%,#8f9094 40%,#4c4d51 100%);border-bottom-right-radius:34px 13px;"></div>
</div>
<div class="a" style="left:1118px;top:663px;width:600px;height:3px;background:#23232a;"></div>
<div class="a" id="right-rim" style="left:1116px;top:76px;width:700px;height:587px;background:#e0e0e0;border-radius:31px;"></div>
<div class="a" id="right-bezel" style="left:1111px;top:81px;width:700px;height:572px;background:#02020d;border-radius:26px;"></div>
<div class="a" id="right-screen" style="left:1495px;top:105px;width:294px;height:523px;background:#fbfcfc;overflow:hidden;"><div class="a" style="left:-1495px;top:-105px;width:1920px;height:851px;">
<div class="a" style="left:1495px;top:105px;width:294px;height:12px;background:#fdfdfe;"></div><svg class="a" style="left:0px;top:0px;overflow:visible" width="1920" height="851" viewBox="0 0 1920 851"><path d="M1731.5,111 h6" stroke="#999" stroke-width="0.9"/><path d="M1756,109 h5 v5 h-5 z M1757.5,109 v-1.5 h5 v5 h-1.5" stroke="#333" stroke-width="0.9" fill="none"/><path d="M1781,108.5 L1786,113.5 M1786,108.5 L1781,113.5" stroke="#333" stroke-width="0.9"/></svg><div class="a" style="left:1495px;top:117px;width:290px;height:13px;background:#e1e2e3;"></div><div class="a" style="left:1495px;top:130px;width:290px;height:38px;background:#f4f4f5;"></div><div class="a" style="left:1495px;top:167.5px;width:290px;height:1px;background:#d7d8da;"></div><div class="a" style="left:1695.5px;top:133px;width:0.8px;height:33px;background:#dcdde0;"></div><div class="t" style="left:1699.6px;top:135.19px;font-size:6.966292134831461px;color:#4a78b8;transform:scaleX(0.890);transform-origin:0 0;-webkit-text-stroke:0.195px #4a78b8;">Links</div><div class="t" style="left:1746px;top:135.19px;font-size:6.966292134831461px;color:#4a78b8;transform:scaleX(0.890);transform-origin:0 0;-webkit-text-stroke:0.195px #4a78b8;">Nodes</div><div class="a" style="left:1703px;top:145px;width:8px;height:8px;border:1px solid #7a8aa8;background:#fff;box-sizing:border-box;"></div><div class="a" style="left:1703px;top:155.3px;width:8px;height:8px;border:1px solid #7a8aa8;background:#fff;box-sizing:border-box;"></div><div class="a" style="left:1749.5px;top:145px;width:8px;height:8px;border:1px solid #7a8aa8;background:#fff;box-sizing:border-box;"></div><svg class="a" style="left:1749.5px;top:145px;overflow:visible" width="8" height="8" viewBox="1749.5 145 8 8"><path d="M1751.5,149.0 L1752.86,151 L1756.0,146.5" stroke="#12264a" stroke-width="1.4" fill="none"/></svg><div class="a" style="left:1749.5px;top:155.3px;width:8px;height:8px;border:1px solid #7a8aa8;background:#fff;box-sizing:border-box;"></div><div class="t" style="left:1713px;top:146.12px;font-size:6.2921348314606735px;color:#333;transform:scaleX(0.890);transform-origin:0 0;-webkit-text-stroke:0.176px #333;">Flowrate</div><div class="t" style="left:1713px;top:156.42px;font-size:6.2921348314606735px;color:#333;transform:scaleX(0.890);transform-origin:0 0;-webkit-text-stroke:0.176px #333;">Name</div><div class="t" style="left:1759.5px;top:146.12px;font-size:6.2921348314606735px;color:#333;transform:scaleX(0.890);transform-origin:0 0;-webkit-text-stroke:0.176px #333;">Pressure</div><div class="t" style="left:1759.5px;top:156.42px;font-size:6.2921348314606735px;color:#333;transform:scaleX(0.890);transform-origin:0 0;-webkit-text-stroke:0.176px #333;">Name</div><div class="a" style="left:1785px;top:105px;width:4px;height:523px;background:#f2f2f4;"></div><div class="a" style="left:1495px;top:168px;width:290px;height:460px;background:#efeff1;"></div><div class="a" style="left:1495px;top:183px;width:139px;height:380px;background:#fdfdfd;"></div><div class="a" style="left:1634px;top:183px;width:9px;height:380px;background:#f0f0f0;"></div><div class="a" style="left:1635px;top:348px;width:7.5px;height:51px;background:#d6d6d6;"></div><div class="a" style="left:1495px;top:182px;width:148px;height:1px;background:#d8d9dd;"></div><div class="a" style="left:1643px;top:168px;width:2px;height:460px;background:#e6e6e6;"></div><div class="a" style="left:1645px;top:168px;width:0.8px;height:460px;background:#c9c9c9;"></div><svg class="a" style="left:0px;top:0px;overflow:visible" width="1920" height="851" viewBox="0 0 1920 851"><path d="M1649,168.5 L1646.5,171.5 L1649,174.5 Z M1647,176.5 L1649.5,179.5 L1647,182.5 Z" fill="#666"/><path d="M1647,331 v0.8 M1647,333.5 v0.8 M1647,336 v0.8" stroke="#888" stroke-width="0.8"/></svg><svg class="a" style="left:0px;top:0px;overflow:visible" width="1920" height="851" viewBox="0 0 1920 851"><path d="M1495,486.5 L1508.3,480.4 V492" stroke="#ff33ff" stroke-width="0.8" fill="none"/><circle cx="1508.3" cy="493.3" r="1.3" fill="none" stroke="#ff33ff" stroke-width="0.7"/><path d="M1505.5,490.6 h6" stroke="#888" stroke-width="0.6"/></svg><div class="t" style="left:1516px;top:488.01px;font-size:6.1px;color:#3434e8;">Available Pressure of 9.0 Barg</div><div class="t" style="left:1516px;top:493.61px;font-size:6.1px;color:#3434e8;">Fire Water Ringmain Tie-in</div><div class="a" style="left:1495px;top:563px;width:148px;height:15.5px;background:#efeff1;"></div><div class="a" style="left:1495px;top:578.5px;width:148px;height:14px;background:linear-gradient(180deg,#e6e7e9,#d9dadc);"></div><div class="a" style="left:1495px;top:592.5px;width:139px;height:15.5px;background:#fdfdfd;border-bottom:1px solid #e4e4e6;box-sizing:border-box;"></div><div class="a" style="left:1495px;top:608px;width:139px;height:9px;background:#f5f5f6;"></div><div class="a" style="left:1634px;top:592.5px;width:9px;height:35px;background:#f0f0f0;"></div><div class="a" style="left:1636px;top:593.5px;width:5px;height:4px;background:#d6d6d6;"></div><div class="a" style="left:1495px;top:617px;width:148px;height:11px;background:#f2f2f3;"></div><div class="a" style="left:1651px;top:168px;width:134px;height:460px;background:#f7f7f9;"></div><div class="a" style="left:1649.5px;top:168px;width:1.5px;height:460px;background:#e0e0e3;"></div><div class="t" style="left:1652.6px;top:174.04px;font-size:7.471910112359551px;color:#111;transform:scaleX(0.890);transform-origin:0 0;-webkit-text-stroke:0.209px #111;">Node parameters</div><div class="a" style="left:1652px;top:186.7px;width:133px;height:16.7px;background:linear-gradient(180deg,#e8e9ee,#d5d6dd);"></div><div class="a" style="left:1709.3px;top:186.7px;width:0.8px;height:16.7px;background:#c5c6cc;"></div><div class="a" style="left:1760.3px;top:186.7px;width:0.8px;height:16.7px;background:#c5c6cc;"></div><div class="t" style="left:1656.5px;top:191.34px;font-size:7.471910112359551px;color:#111;transform:scaleX(0.890);transform-origin:0 0;-webkit-text-stroke:0.209px #111;">Inputs/ Results</div><div class="a" style="left:1652px;top:203.4px;width:133px;height:13.04px;background:#f8f8fa;border-bottom:1px solid #e3e3e7;box-sizing:border-box;"></div><div class="a" style="left:1709.3px;top:203.4px;width:0.8px;height:13.04px;background:#e0e0e4;"></div><div class="a" style="left:1760.3px;top:203.4px;width:0.8px;height:13.04px;background:#e0e0e4;"></div><div class="t" style="left:1658px;top:206.24px;font-size:7.471910112359551px;color:#111;transform:scaleX(0.890);transform-origin:0 0;-webkit-text-stroke:0.209px #111;">ID</div><div class="t" style="left:1711.5px;top:206.24px;font-size:7.471910112359551px;color:#111;transform:scaleX(0.890);transform-origin:0 0;-webkit-text-stroke:0.209px #111;">1</div><div class="t" style="left:1762.5px;top:206.24px;font-size:7.471910112359551px;color:#111;transform:scaleX(0.890);transform-origin:0 0;-webkit-text-stroke:0.209px #111;"></div><div class="a" style="left:1652px;top:216.44px;width:133px;height:13.04px;background:#f8f8fa;border-bottom:1px solid #e3e3e7;box-sizing:border-box;"></div><div class="a" style="left:1709.3px;top:216.44px;width:0.8px;height:13.04px;background:#e0e0e4;"></div><div class="a" style="left:1760.3px;top:216.44px;width:0.8px;height:13.04px;background:#e0e0e4;"></div><div class="t" style="left:1658px;top:219.28px;font-size:7.471910112359551px;color:#111;transform:scaleX(0.890);transform-origin:0 0;-webkit-text-stroke:0.209px #111;">Name</div><div class="t" style="left:1711.5px;top:219.28px;font-size:7.471910112359551px;color:#111;transform:scaleX(0.890);transform-origin:0 0;-webkit-text-stroke:0.209px #111;">1</div><div class="t" style="left:1762.5px;top:219.28px;font-size:7.471910112359551px;color:#111;transform:scaleX(0.890);transform-origin:0 0;-webkit-text-stroke:0.209px #111;"></div><div class="a" style="left:1652px;top:229.48000000000002px;width:133px;height:13.04px;background:#f8f8fa;border-bottom:1px solid #e3e3e7;box-sizing:border-box;"></div><div class="a" style="left:1709.3px;top:229.48000000000002px;width:0.8px;height:13.04px;background:#e0e0e4;"></div><div class="a" style="left:1760.3px;top:229.48000000000002px;width:0.8px;height:13.04px;background:#e0e0e4;"></div><div class="t" style="left:1658px;top:232.32px;font-size:7.471910112359551px;color:#111;transform:scaleX(0.890);transform-origin:0 0;-webkit-text-stroke:0.209px #111;">Elevation</div><div class="t" style="left:1711.5px;top:232.32px;font-size:7.471910112359551px;color:#111;transform:scaleX(0.890);transform-origin:0 0;-webkit-text-stroke:0.209px #111;">0</div><div class="t" style="left:1762.5px;top:232.32px;font-size:7.471910112359551px;color:#111;transform:scaleX(0.890);transform-origin:0 0;-webkit-text-stroke:0.209px #111;">m</div><div class="a" style="left:1652px;top:242.52px;width:133px;height:13.04px;background:#f8f8fa;border-bottom:1px solid #e3e3e7;box-sizing:border-box;"></div><div class="a" style="left:1709.3px;top:242.52px;width:0.8px;height:13.04px;background:#e0e0e4;"></div><div class="a" style="left:1760.3px;top:242.52px;width:0.8px;height:13.04px;background:#e0e0e4;"></div><div class="t" style="left:1658px;top:245.36px;font-size:7.471910112359551px;color:#111;transform:scaleX(0.890);transform-origin:0 0;-webkit-text-stroke:0.209px #111;">Pressure</div><div class="t" style="left:1711.5px;top:245.36px;font-size:7.471910112359551px;color:#111;transform:scaleX(0.890);transform-origin:0 0;-webkit-text-stroke:0.209px #111;">10.01</div><div class="t" style="left:1762.5px;top:245.36px;font-size:7.471910112359551px;color:#111;transform:scaleX(0.890);transform-origin:0 0;-webkit-text-stroke:0.209px #111;">bar</div><div class="a" style="left:1652px;top:255.56px;width:133px;height:13.04px;background:#f8f8fa;border-bottom:1px solid #e3e3e7;box-sizing:border-box;"></div><div class="a" style="left:1709.3px;top:255.56px;width:0.8px;height:13.04px;background:#e0e0e4;"></div><div class="a" style="left:1760.3px;top:255.56px;width:0.8px;height:13.04px;background:#e0e0e4;"></div><div class="t" style="left:1658px;top:258.40px;font-size:7.471910112359551px;color:#111;transform:scaleX(0.890);transform-origin:0 0;-webkit-text-stroke:0.209px #111;">Flow In</div><div class="t" style="left:1711.5px;top:258.40px;font-size:7.471910112359551px;color:#111;transform:scaleX(0.890);transform-origin:0 0;-webkit-text-stroke:0.209px #111;">506.0</div><div class="t" style="left:1762.5px;top:258.40px;font-size:7.471910112359551px;color:#111;transform:scaleX(0.890);transform-origin:0 0;-webkit-text-stroke:0.209px #111;">m³/h</div><div class="a" style="left:1651px;top:517.6px;width:134px;height:1px;background:#c9cacd;"></div><div class="a" style="left:1651px;top:519px;width:134px;height:96px;background:#dcdce6;"></div><svg class="a" style="left:0px;top:0px;overflow:visible" width="1920" height="851" viewBox="0 0 1920 851"><path d="M1668.5,539 L1684.5,531.5 L1700.5,539 L1684.5,546.5 Z" stroke="#3a3a3a" stroke-width="0.5" fill="none" stroke-dasharray="1.3,0.5"/><path d="M1669.0,551 L1686,543.5 L1703.0,551 L1686,558.5 Z" stroke="#3a3a3a" stroke-width="0.5" fill="none" stroke-dasharray="1.3,0.5"/><path d="M1688.5,536 v-11 h2 v9 M1692.5,535 v-12 h2 v10 M1674.5,537 v-6 l2,1 v4 M1681.5,535 v-5 l2,1" stroke="#3a3a3a" stroke-width="0.5" fill="none"/><path d="M1672.5,540 l4,3 M1696.5,540 l-4,3 M1673,551 l3,4 M1699,551 l-3,4" stroke="#3a3a3a" stroke-width="0.45" fill="none"/><path d="M1705.0,555 L1721,547.5 L1737.0,555 L1721,562.5 Z" stroke="#3a3a3a" stroke-width="0.5" fill="none" stroke-dasharray="1.3,0.5"/><path d="M1706.0,568.7 L1723,561.2 L1740.0,568.7 L1723,576.2 Z" stroke="#3a3a3a" stroke-width="0.5" fill="none" stroke-dasharray="1.3,0.5"/><path d="M1725,552 v-11 h2 v9 M1729,551 v-12 h2 v10 M1711,553 v-6 l2,1 v4 M1718,551 v-5 l2,1" stroke="#3a3a3a" stroke-width="0.5" fill="none"/><path d="M1709,556 l4,3 M1733,556 l-4,3 M1710,568.7 l3,4 M1736,568.7 l-3,4" stroke="#3a3a3a" stroke-width="0.45" fill="none"/><path d="M1734.5,570.5 L1750.5,563.0 L1766.5,570.5 L1750.5,578.0 Z" stroke="#3a3a3a" stroke-width="0.5" fill="none" stroke-dasharray="1.3,0.5"/><path d="M1735.4,582.2 L1752.4,574.7 L1769.4,582.2 L1752.4,589.7 Z" stroke="#3a3a3a" stroke-width="0.5" fill="none" stroke-dasharray="1.3,0.5"/><path d="M1754.5,567.5 v-11 h2 v9 M1758.5,566.5 v-12 h2 v10 M1740.5,568.5 v-6 l2,1 v4 M1747.5,566.5 v-5 l2,1" stroke="#3a3a3a" stroke-width="0.5" fill="none"/><path d="M1738.5,571.5 l4,3 M1762.5,571.5 l-4,3 M1739.4,582.2 l3,4 M1765.4,582.2 l-3,4" stroke="#3a3a3a" stroke-width="0.45" fill="none"/><path d="M1657.4,558.2 L1732,597" stroke="#3a3a3a" stroke-width="0.55" fill="none" stroke-dasharray="1.4,0.4"/><path d="M1655,556 l3,-2 l2,2 l-2,4 M1690,572 l4,-8 v10 M1720,586 l4,-7 v11" stroke="#3a3a3a" stroke-width="0.5" fill="none"/><path d="M1660,562 L1674,556 M1695,575 L1706,570 M1728,592 L1740,588" stroke="#3a3a3a" stroke-width="0.5" fill="none" stroke-dasharray="1.2,0.5"/><path d="M1731,598 v12 l30,-11 v-7 M1733,598 v11 M1735,598.5 v10" stroke="#3a3a3a" stroke-width="0.55" fill="none"/><path d="M1735,609.0 l2,-1.5" stroke="#3a3a3a" stroke-width="0.4" fill="none"/><path d="M1738,607.9 l2,-1.5" stroke="#3a3a3a" stroke-width="0.4" fill="none"/><path d="M1741,606.8 l2,-1.5" stroke="#3a3a3a" stroke-width="0.4" fill="none"/><path d="M1744,605.7 l2,-1.5" stroke="#3a3a3a" stroke-width="0.4" fill="none"/><path d="M1747,604.6 l2,-1.5" stroke="#3a3a3a" stroke-width="0.4" fill="none"/><path d="M1750,603.5 l2,-1.5" stroke="#3a3a3a" stroke-width="0.4" fill="none"/><path d="M1753,602.4 l2,-1.5" stroke="#3a3a3a" stroke-width="0.4" fill="none"/><path d="M1756,601.3 l2,-1.5" stroke="#3a3a3a" stroke-width="0.4" fill="none"/><path d="M1758,592 v8 M1761,591 v9 M1764,590 v10 M1767,594 l8,4 l11,-6" stroke="#3a3a3a" stroke-width="0.5" fill="none"/></svg><div class="a" style="left:1651px;top:615px;width:134px;height:13px;background:#f8f8fa;"></div>
</div></div>

<!-- ============ MIDDLE LAPTOP ============ -->
<div class="a" id="mid-base" style="left:294px;top:716px;width:1332px;height:41px;">
  <div class="a" style="left:0;top:0;width:1332px;height:26px;background:linear-gradient(90deg,#5a5b5d 0px,#a0a1a3 6px,#9a9b9d 20px,#626365 27px,#68696b 150px,#8b8c8d 240px,#888989 520px,#8e8f90 820px,#8a8b8c 1020px,#6e6f70 1230px,#646567 1305px,#9a9b9d 1312px,#a0a1a3 1326px,#5a5b5d 1332px);"></div>
  <div class="a" style="left:0;top:0;width:1332px;height:26px;background:linear-gradient(180deg,rgba(0,0,0,0.14),rgba(0,0,0,0) 60%,rgba(255,255,255,0.08));"></div>
  <div class="a" style="left:581px;top:0;width:174px;height:12px;background:linear-gradient(90deg,#3f4141,#545656 20%,#565858 80%,#3f4141);border-radius:0 0 14px 14px;"></div>
  <div class="a" style="left:0;top:25px;width:1332px;height:1px;background:#a3a3a3;"></div>
  <div class="a" style="left:0;top:26px;width:1332px;height:15px;background:linear-gradient(180deg,#636466 0%,#4e4f51 45%,#262628 100%);border-radius:0 0 52px 52px / 0 0 15px 15px;"></div>
</div>
<div class="a" style="left:535px;top:713px;width:846px;height:3px;background:#121214;"></div>
<div class="a" id="mid-rim" style="left:429px;top:-2px;width:1071px;height:715px;background:linear-gradient(180deg,#e0e0e0 0px,#e0e0e0 700px,rgba(0,0,0,0) 700px),linear-gradient(90deg,#7e7e7e 0%,#6a6a6a 12%,#4a4a4a 50%,#6a6a6a 88%,#7e7e7e 100%);border-radius:40px 40px 36px 36px;"></div>
<div class="a" id="mid-bezel" style="left:434px;top:4px;width:1059px;height:696px;background:#02020d;border-radius:31px;"></div>
<div class="a" id="mid-screen" style="left:459px;top:33px;width:1007px;height:636px;background:#fbfcfc;overflow:hidden;"><div class="a" style="left:-459px;top:-33px;width:1920px;height:851px;">
<div class="a" style="left:459px;top:33px;width:1007px;height:15px;background:#fdfdfe;"></div><svg class="a" style="left:0px;top:0px;overflow:visible" width="1920" height="851" viewBox="0 0 1920 851"><circle cx="459" cy="41" r="4.5" fill="#2a9fd8"/><circle cx="459" cy="41" r="2" fill="none" stroke="#fff" stroke-width="1"/></svg><div class="t" style="left:468px;top:37.40px;font-size:8.98876404494382px;color:#222;transform:scaleX(0.890);transform-origin:0 0;-webkit-text-stroke:0.252px #222;">Flowmax - Brine Reject System.flmx</div><svg class="a" style="left:0px;top:0px;overflow:visible" width="1920" height="851" viewBox="0 0 1920 851"><path d="M1397,40.5 H1405" stroke="#444" stroke-width="1"/><path d="M1427.5,39.5 h6 v6 h-6 z M1429.5,39.5 v-2 h6 v6 h-2" stroke="#333" stroke-width="1" fill="none"/><path d="M1456,37.5 L1462,44 M1462,37.5 L1456,44" stroke="#333" stroke-width="1"/></svg><div class="a" style="left:459px;top:48px;width:1007px;height:17px;background:#f4f4f7;"></div><div class="a" style="left:459px;top:64px;width:1007px;height:1px;background:#d7d8dc;"></div><div class="a" style="left:459px;top:48px;width:32px;height:17px;background:#29a3dd;"></div><div class="t" style="left:455px;top:52.54px;font-size:9.101123595505618px;color:#10233a;transform:scaleX(0.890);transform-origin:0 0;-webkit-text-stroke:0.255px #10233a;">File</div><div class="a" style="left:491px;top:49px;width:53px;height:15px;background:#e5e6eb;border-right:1px solid #eef0f3;box-sizing:border-box;"></div><div class="t" style="left:501.5px;top:53.34px;font-size:9.101123595505618px;color:#1a1a1a;transform:scaleX(0.890);transform-origin:0 0;-webkit-text-stroke:0.255px #1a1a1a;">Home</div><div class="a" style="left:544px;top:49px;width:53px;height:15px;background:#e5e6eb;border-right:1px solid #eef0f3;box-sizing:border-box;"></div><div class="t" style="left:555px;top:53.34px;font-size:9.101123595505618px;color:#1a1a1a;transform:scaleX(0.890);transform-origin:0 0;-webkit-text-stroke:0.255px #1a1a1a;">Tools</div><div class="a" style="left:597px;top:49px;width:68px;height:15px;background:#e5e6eb;border-right:1px solid #eef0f3;box-sizing:border-box;"></div><div class="t" style="left:607.5px;top:53.34px;font-size:9.101123595505618px;color:#1a1a1a;transform:scaleX(0.890);transform-origin:0 0;-webkit-text-stroke:0.255px #1a1a1a;">Dynamics</div><div class="a" style="left:666px;top:48px;width:61px;height:17px;background:#f7f7fa;border:1px solid #d5d6da;border-bottom:none;box-sizing:border-box;"></div><div class="t" style="left:676px;top:52.34px;font-size:9.101123595505618px;color:#1a1a1a;transform:scaleX(0.890);transform-origin:0 0;-webkit-text-stroke:0.255px #1a1a1a;">Reports</div><div class="a" style="left:459px;top:65px;width:1007px;height:45px;background:#f5f5f8;"></div><div class="a" style="left:459px;top:109px;width:1007px;height:2px;background:#d3d4d8;"></div><div class="a" style="left:488px;top:71px;width:1px;height:37px;background:#dfe0e4;"></div><div class="a" style="left:629px;top:71px;width:1px;height:37px;background:#dfe0e4;"></div><div class="a" style="left:680px;top:71px;width:1px;height:37px;background:#dfe0e4;"></div><div class="a" style="left:767px;top:71px;width:1px;height:37px;background:#dfe0e4;"></div><div class="a" style="left:1353px;top:71px;width:1px;height:37px;background:#dfe0e4;"></div><svg class="a" style="left:0px;top:0px;overflow:visible" width="1920" height="851" viewBox="0 0 1920 851"><path d="M452,75 H470 L475,80 V93 H452 Z" fill="#4e6e8e"/><rect x="455" y="76" width="9" height="5" fill="#dbe4ee"/><rect x="455" y="84" width="16" height="8" fill="#e9eef3"/><path d="M457,86.5 H469 M457,89 H469" stroke="#8aa" stroke-width="0.8"/></svg><div class="t" style="left:455px;top:95.54px;font-size:9.101123595505618px;color:#333;transform:scaleX(0.890);transform-origin:0 0;-webkit-text-stroke:0.255px #333;">Save</div><svg class="a" style="left:0px;top:0px;overflow:visible" width="1920" height="851" viewBox="0 0 1920 851"><rect x="503" y="76" width="15" height="16" fill="#ee4d70"/><path d="M515,76 L518,76 L518,79 Z" fill="#c00"/><path d="M506,89 Q510,85 511,79 Q513,86 516,88 Q511,86 506,89" stroke="#fff" stroke-width="1" fill="none"/></svg><div class="t" style="left:494px;top:95.54px;font-size:9.101123595505618px;color:#333;transform:scaleX(0.890);transform-origin:0 0;-webkit-text-stroke:0.255px #333;">Project File</div><svg class="a" style="left:0px;top:0px;overflow:visible" width="1920" height="851" viewBox="0 0 1920 851"><rect x="548" y="76" width="16" height="16" fill="#1fa35a"/><rect x="556" y="76" width="8" height="8" fill="#7fd6b0"/><rect x="548" y="76" width="8" height="8" fill="#45c08a"/><rect x="545" y="79" width="9" height="9" fill="#1b8a48"/><text x="549.5" y="86.5" font-size="7" font-family="Liberation Sans" text-anchor="middle" fill="#fff">X</text></svg><div class="t" style="left:541px;top:95.54px;font-size:9.101123595505618px;color:#333;transform:scaleX(0.890);transform-origin:0 0;-webkit-text-stroke:0.255px #333;">Excel files</div><svg class="a" style="left:0px;top:0px;overflow:visible" width="1920" height="851" viewBox="0 0 1920 851"><rect x="591" y="77" width="14" height="15" fill="#fff" stroke="#d0763a" stroke-width="1"/><rect x="595" y="75" width="6" height="3" fill="#9aa"/><path d="M594,82 H602 M594,85 H602 M594,88 H602" stroke="#3b6fd0" stroke-width="1.4"/></svg><div class="t" style="left:582px;top:95.54px;font-size:9.101123595505618px;color:#333;transform:scaleX(0.890);transform-origin:0 0;-webkit-text-stroke:0.255px #333;">Datasheet</div><svg class="a" style="left:0px;top:0px;overflow:visible" width="1920" height="851" viewBox="0 0 1920 851"><rect x="642" y="76" width="19" height="13" fill="#fbf3c8" stroke="#6b86a8" stroke-width="0.8" stroke-dasharray="1.5,1.5"/><rect x="648" y="84" width="15" height="10" rx="1.5" fill="#7a98b8"/><circle cx="655.5" cy="89" r="3" fill="#bfe0ff"/></svg><div class="t" style="left:635px;top:95.54px;font-size:9.101123595505618px;color:#333;transform:scaleX(0.890);transform-origin:0 0;-webkit-text-stroke:0.255px #333;">screenshot</div><svg class="a" style="left:0px;top:0px;overflow:visible" width="1920" height="851" viewBox="0 0 1920 851"><rect x="690" y="78" width="16" height="22" rx="1.5" fill="none" stroke="#23506f" stroke-width="1.2"/><rect x="695" y="76" width="6" height="4" fill="none" stroke="#23506f" stroke-width="1"/><circle cx="698" cy="87" r="2.2" fill="none" stroke="#23506f" stroke-width="1"/><path d="M694.5,92 Q698,88 701.5,92 M694,95 H702 M694,97.5 H702" stroke="#23506f" stroke-width="1" fill="none"/></svg><div class="t" style="left:711px;top:80.04px;font-size:9.101123595505618px;color:#333;transform:scaleX(0.890);transform-origin:0 0;-webkit-text-stroke:0.255px #333;">Project</div><div class="t" style="left:711px;top:90.54px;font-size:9.101123595505618px;color:#333;transform:scaleX(0.890);transform-origin:0 0;-webkit-text-stroke:0.255px #333;">Informations</div><div class="t" style="left:1358px;top:70.82px;font-size:8.539325842696629px;color:#4a78b8;transform:scaleX(0.890);transform-origin:0 0;-webkit-text-stroke:0.239px #4a78b8;">Links</div><div class="t" style="left:1415px;top:70.82px;font-size:8.539325842696629px;color:#333;transform:scaleX(0.890);transform-origin:0 0;-webkit-text-stroke:0.239px #333;">Nodes</div><div class="a" style="left:1362px;top:83px;width:9px;height:9px;border:1px solid #7a8aa8;background:#fff;box-sizing:border-box;"></div><svg class="a" style="left:1362px;top:83px;overflow:visible" width="9" height="9" viewBox="1362 83 9 9"><path d="M1364,87.5 L1365.78,90 L1369.5,84.5" stroke="#12264a" stroke-width="1.4" fill="none"/></svg><div class="t" style="left:1375px;top:83.54px;font-size:8.089887640449438px;color:#333;transform:scaleX(0.890);transform-origin:0 0;-webkit-text-stroke:0.227px #333;">Flowrate</div><div class="a" style="left:1362px;top:95px;width:9px;height:9px;border:1px solid #7a8aa8;background:#fff;box-sizing:border-box;"></div><div class="t" style="left:1375px;top:95.54px;font-size:8.089887640449438px;color:#333;transform:scaleX(0.890);transform-origin:0 0;-webkit-text-stroke:0.227px #333;">Name</div><div class="a" style="left:1418px;top:83px;width:9px;height:9px;border:1px solid #7a8aa8;background:#fff;box-sizing:border-box;"></div><div class="t" style="left:1431px;top:83.54px;font-size:8.089887640449438px;color:#333;transform:scaleX(0.890);transform-origin:0 0;-webkit-text-stroke:0.227px #333;">Pressure</div><div class="a" style="left:1418px;top:95px;width:9px;height:9px;border:1px solid #7a8aa8;background:#fff;box-sizing:border-box;"></div><svg class="a" style="left:1418px;top:95px;overflow:visible" width="9" height="9" viewBox="1418 95 9 9"><path d="M1420,99.5 L1421.78,102 L1425.5,96.5" stroke="#12264a" stroke-width="1.4" fill="none"/></svg><div class="t" style="left:1431px;top:95.54px;font-size:8.089887640449438px;color:#333;transform:scaleX(0.890);transform-origin:0 0;-webkit-text-stroke:0.227px #333;">Name</div><div class="a" style="left:459px;top:111px;width:1007px;height:557px;background:#efeff1;"></div><div class="a" style="left:459px;top:111px;width:62px;height:557px;background:#fcfdfd;"></div><div class="a" style="left:521px;top:111px;width:1px;height:557px;background:#c9cacc;"></div><div class="a" style="left:522px;top:111px;width:2px;height:557px;background:#f2f2f2;"></div><div class="a" style="left:524px;top:111px;width:1px;height:557px;background:#c9cacc;"></div><div class="a" style="left:459px;top:117px;width:25px;height:25px;background:#cdd3d6;"></div><div class="a" style="left:459px;top:143.5px;width:62px;height:1px;background:#e3e4e6;"></div><div class="a" style="left:459px;top:172.5px;width:62px;height:1px;background:#e3e4e6;"></div><div class="a" style="left:459px;top:201.5px;width:62px;height:1px;background:#e3e4e6;"></div><div class="a" style="left:459px;top:230px;width:62px;height:1px;background:#e3e4e6;"></div><div class="a" style="left:459px;top:258.5px;width:62px;height:1px;background:#e3e4e6;"></div><div class="a" style="left:459px;top:287px;width:62px;height:1px;background:#e3e4e6;"></div><div class="a" style="left:459px;top:316px;width:62px;height:1px;background:#e3e4e6;"></div><svg class="a" style="left:0px;top:0px;overflow:visible" width="1920" height="851" viewBox="0 0 1920 851"><g transform="translate(468,129) scale(1.0)"><path d="M-3.5,-6 L4,1.5 L1,1.8 L2.8,5.3 L1.4,6 L-0.4,2.6 L-3.5,4.6 Z" fill="#fff" stroke="#1f6f6a" stroke-width="1.2"/></g><g transform="translate(503.5,129) scale(1.0)"><path d="M-8,-5 V5 M8,-5 V5" stroke="#2e3b4b" fill="none" stroke-width="1.6"/></g><g transform="translate(503.5,129) scale(1.0)"><path d="M-8,0 H8" stroke="#2e3b4b" fill="none" stroke-width="3.2"/></g><g transform="translate(468,158) scale(1.0)"><path d="M-6,-5 Q-6,-7.5 0,-7.5 Q6,-7.5 6,-5 V6 H-6 Z" stroke="#2e3b4b" fill="none" stroke-width="1.4"/></g><g transform="translate(468,158) scale(1.0)"><path d="M-6,4.5 H6" stroke="#2e3b4b" fill="none" stroke-width="2.4"/></g><g transform="translate(503.5,158) scale(1.0)"><path d="M-5.8,-0.5 a5.8,5.8 0 1 0 11.6,0 a5.8,5.8 0 1 0 -11.6,0 M0,-6.3 H6.5 V-2.2 H5 M-2.3,-0.5 a2.3,2.3 0 1 0 4.6,0 a2.3,2.3 0 1 0 -4.6,0 M-3.5,4.6 L-5.5,7.3 H5.5 L3.5,4.6" stroke="#2e3b4b" fill="none" stroke-width="1.4"/></g><g transform="translate(468,187) scale(1.0)"><path d="M-6,-6 H6 Q7,-6 7,-5 V6 Q7,7 6,7 H-6 Q-7,7 -7,6 V-5 Q-7,-6 -6,-6 Z" stroke="#2e3b4b" fill="none" stroke-width="1.1"/></g><text x="468" y="189.6" font-size="7.0" font-family="Liberation Sans" text-anchor="middle" fill="#2e3b4b">PD</text><g transform="translate(503.5,187) scale(1.0)"><path d="M-7,1 L7,7 V1 L-7,7 Z M0,4 V-2 M-3,-2 H3 M1,-2 Q5,-2 5,-6 H1 V-8" stroke="#2e3b4b" fill="none" stroke-width="1.2"/></g><g transform="translate(468,216) scale(1.0)"><path d="M-7,-5 H7 V5 H-7 Z" stroke="#2e3b4b" fill="none" stroke-width="1.4"/></g><g transform="translate(468,216) scale(1.0)"><path d="M0,-5 V-1.5 M0,1.5 V5" stroke="#2e3b4b" fill="none" stroke-width="2.2"/></g><g transform="translate(503.5,216) scale(1.0)"><path d="M0,-8 V-3 M-7,2 Q-7,-3 0,-3 Q7,-3 7,2 Z M-3,5 L-4,7 M0,5 V7 M3,5 L4,7" stroke="#2e3b4b" fill="none" stroke-width="1.3"/></g><g transform="translate(468,244.5) scale(1.0)"><path d="M-6.5,0 A6.5,6.5 0 1 0 6.5,0 A6.5,6.5 0 1 0 -6.5,0 M-6.5,-1.5 H6.5 M-6.5,1.5 H6.5" stroke="#2e3b4b" fill="none" stroke-width="1.3"/></g><g transform="translate(503.5,244.5) scale(1.0)"><path d="M-6,-6.5 V-2" stroke="#2e3b4b" fill="none" stroke-width="2.2"/></g><g transform="translate(503.5,244.5) scale(1.0)"><path d="M-5,-6 H5.5 V5 M-5,-2.5 H2 V5" stroke="#2e3b4b" fill="none" stroke-width="1.3"/></g><g transform="translate(503.5,244.5) scale(1.0)"><path d="M1,6 H7.5" stroke="#2e3b4b" fill="none" stroke-width="2.2"/></g><text x="466.0" y="278.0" font-size="14.0" font-family="Liberation Sans" text-anchor="middle" fill="#2e3b4b">A</text><text x="473.0" y="272.0" font-size="9.0" font-family="Liberation Sans" font-weight="bold" text-anchor="middle" fill="#2e3b4b">+</text><g transform="translate(503.5,273) scale(1.0)"><path d="M-6,-6 H6 Q7,-6 7,-5 V3 Q7,4 6,4 H-1 L-4,7 V4 H-6 Q-7,4 -7,3 V-5 Q-7,-6 -6,-6 Z M-4,-3 H4 M-4,-0.5 H4" stroke="#2e3b4b" fill="none" stroke-width="1.1"/></g><g transform="translate(468,302) scale(1.0)"><path d="M-6,-6 H6 V6 H-6 Z M-6,-2 H6 M-6,2 H6 M-2,-6 V6 M2,-6 V6" stroke="#2e3b4b" fill="none" stroke-width="0.7"/></g><g transform="translate(468,302) scale(1.0)"><path d="M-5.5,-6 V6 M-6,-5.5 H6" stroke="#2e3b4b" fill="none" stroke-width="1.8" stroke-dasharray="2.5,1.2"/></g></svg><div class="a" style="left:459px;top:615px;width:62px;height:1px;background:#d9dadc;"></div><svg class="a" style="left:0px;top:0px;overflow:visible" width="1920" height="851" viewBox="0 0 1920 851"><path d="M459,627 H462 V633 M459,630 H463" stroke="#556" stroke-width="1" fill="none"/><circle cx="495" cy="630" r="4.8" fill="none" stroke="#2b5d9a" stroke-width="1.2"/><circle cx="495" cy="630" r="2.6" fill="none" stroke="#2b5d9a" stroke-width="0.8"/><path d="M459,647 h4 M461,645 v4" stroke="#556" stroke-width="1.3"/><rect x="490" y="643" width="10" height="10" fill="#dbe8f5"/><path d="M491,648 Q495,643 499,648" stroke="#2b5d9a" stroke-width="1" fill="none"/><rect x="490" y="652" width="10" height="2" fill="#2a8ee0"/></svg><div class="t" style="left:472px;top:625.54px;font-size:9.101123595505618px;color:#333;transform:scaleX(0.890);transform-origin:0 0;-webkit-text-stroke:0.255px #333;">57</div><div class="t" style="left:509px;top:625.54px;font-size:9.101123595505618px;color:#333;transform:scaleX(0.890);transform-origin:0 0;-webkit-text-stroke:0.255px #333;">3</div><div class="t" style="left:472px;top:644.54px;font-size:9.101123595505618px;color:#333;transform:scaleX(0.890);transform-origin:0 0;-webkit-text-stroke:0.255px #333;">51</div><div class="t" style="left:509px;top:644.54px;font-size:9.101123595505618px;color:#333;transform:scaleX(0.890);transform-origin:0 0;-webkit-text-stroke:0.255px #333;">1</div><div class="a" style="left:525px;top:111px;width:770px;height:18px;background:#efeff1;"></div><div class="a" style="left:527px;top:112px;width:78px;height:16px;background:#dcdde6;"></div><div class="a" style="left:527px;top:127px;width:78px;height:2px;background:#5a78ac;"></div><div class="a" style="left:605px;top:128px;width:690px;height:1px;background:#d8d9dd;"></div><div class="t" style="left:535px;top:116.04px;font-size:9.101123595505618px;color:#222;transform:scaleX(0.890);transform-origin:0 0;-webkit-text-stroke:0.255px #222;">Main Flowsheet</div><div class="a" style="left:526px;top:129px;width:752px;height:379px;background:#fcfdfd;"></div><div class="a" style="left:1278px;top:129px;width:10px;height:379px;background:#f0f0f0;"></div><div class="a" style="left:1279px;top:321px;width:8px;height:18px;background:#d4d4d4;"></div><div class="a" style="left:1288px;top:111px;width:2px;height:557px;background:#e6e6e6;"></div><div class="a" style="left:1290px;top:111px;width:1px;height:557px;background:#c9c9c9;"></div><svg class="a" style="left:0px;top:0px;overflow:visible" width="1920" height="851" viewBox="0 0 1920 851"><path d="M1294,113 L1291,116.5 L1294,120 Z M1292,122 L1295,125.5 L1292,129 Z" fill="#666"/><path d="M1292,311 v1 M1292,314 v1 M1292,317 v1" stroke="#888" stroke-width="1"/></svg><div class="a" style="left:526px;top:508px;width:752px;height:10px;background:#f0f0f0;"></div><div class="a" style="left:915px;top:509px;width:37px;height:8px;background:#d4d4d4;"></div><svg class="a" style="left:0px;top:0px;overflow:visible" width="1920" height="851" viewBox="0 0 1920 851"><path d="M907,521 h1 M910,521 h1 M913,521 h1" stroke="#888"/></svg><div class="a" style="left:526px;top:518px;width:769px;height:8px;background:#f0f0f0;"></div><svg class="a" style="left:0px;top:0px;overflow:visible" width="1920" height="851" viewBox="0 0 1920 851"><path d="M528,519.5 l4,4 M532,519.5 l-4,4" stroke="#888" stroke-width="0.8"/><path d="M535,524 l2.5,-3.5 l2.5,3.5 z M543,520.5 l2.5,3.5 l2.5,-3.5 z" fill="#888"/></svg><div class="a" style="left:739px;top:154px;width:272px;height:23px;border:1px solid #7c7cf2;box-sizing:border-box;background:#fdfdff;"></div><div class="t" style="left:575px;width:600px;text-align:center;top:159.03px;font-size:13.2px;color:#2828e0;font-weight:bold;letter-spacing:0.5px;">Water Treatment&nbsp; Brine Reject System</div><svg class="a" style="left:0px;top:0px;overflow:visible" width="1920" height="851" viewBox="0 0 1920 851"><path d="M745.4,263.2 L745.4,199.6 L985.3,199.6 L985.3,303.7 L1080.6,303.7" stroke="#f03a3a" stroke-width="1.7" fill="none"/><path d="M745.4,383.7 L745.4,494.9 L985.3,494.9 L985.3,383.6 L1080.6,383.6" stroke="#f03a3a" stroke-width="1.7" fill="none"/><path d="M745.4,263.2 L745.4,303.7" stroke="#33dd33" stroke-width="1.7" fill="none"/><path d="M745.4,303.7 L745.4,383.7" stroke="#2aa6a6" stroke-width="1.7" fill="none"/><path d="M624.9,279.6 L624.9,319.4" stroke="#2aa6a6" stroke-width="1.7" fill="none"/><path d="M624.9,319.4 L624.9,367.2" stroke="#f03a3a" stroke-width="1.7" fill="none"/><path d="M624.9,367.2 L624.9,439.1" stroke="#2aa6a6" stroke-width="1.7" fill="none"/><path d="M624.9,279.6 L672.9,279.6" stroke="#2aa6a6" stroke-width="1.7" fill="none"/><path d="M672.9,279.6 L697,279.6" stroke="#2f4fb5" stroke-width="1.7" fill="none"/><path d="M697,279.6 L713.4,279.6 L713.4,263.2 L745.4,263.2" stroke="#2aa6a6" stroke-width="1.7" fill="none"/><circle cx="684.8" cy="279.6" r="4.6" fill="#7a7a7a" stroke="#444" stroke-width="0.6"/><rect x="684.8" y="275.0" width="5" height="3" fill="#7a7a7a" stroke="#444" stroke-width="0.5"/><circle cx="684.8" cy="279.6" r="2.1" fill="none" stroke="#dcdcdc" stroke-width="0.9"/><rect x="681.8" y="283.40000000000003" width="6" height="1.6" fill="#7a7a7a"/><path d="M722.5,263.2 H730.5" stroke="#2f4fb5" stroke-width="1.4"/><path d="M722.9,260.4 L729.3,263.2 L722.9,266.0 Z M729.8,260.2 V266.2" stroke="#2f4fb5" stroke-width="1.1" fill="#fff"/><circle cx="624.9" cy="279.6" r="1.6" fill="#111"/><circle cx="672.9" cy="279.6" r="1.6" fill="#111"/><circle cx="697" cy="279.6" r="1.6" fill="#111"/><circle cx="713.4" cy="263.2" r="1.6" fill="#111"/><circle cx="745.4" cy="263.2" r="1.6" fill="#111"/><text x="687.5" y="290.1" font-size="4.8" font-family="Liberation Mono" fill="#333" text-anchor="middle" letter-spacing="0.3">23-P102A</text><text x="648" y="278.0" font-size="4.2" font-family="Liberation Sans" fill="#6b6bff" text-anchor="middle">20.00</text><text x="705" y="278.0" font-size="4.2" font-family="Liberation Sans" fill="#6b6bff" text-anchor="middle">20.00</text><text x="728" y="261.0" font-size="4.2" font-family="Liberation Sans" fill="#6b6bff" text-anchor="middle">20.00</text><text x="626.4" y="285.1" font-size="4.2" font-family="Liberation Sans" fill="#6b6bff" text-anchor="middle">N2</text><text x="672.9" y="285.1" font-size="4.2" font-family="Liberation Sans" fill="#6b6bff" text-anchor="middle">N9</text><text x="699" y="285.1" font-size="4.2" font-family="Liberation Sans" fill="#6b6bff" text-anchor="middle">N15</text><text x="717" y="268.7" font-size="4.2" font-family="Liberation Sans" fill="#6b6bff" text-anchor="middle">N13</text><text x="748" y="268.7" font-size="4.2" font-family="Liberation Sans" fill="#6b6bff" text-anchor="middle">N20</text><text x="710.5" y="271.4" font-size="4.2" font-family="Liberation Sans" fill="#6b6bff" text-anchor="middle" transform="rotate(-90 710.5 271.4)">10.00</text><path d="M624.9,319.4 L672.9,319.4" stroke="#2aa6a6" stroke-width="1.7" fill="none"/><path d="M672.9,319.4 L697,319.4" stroke="#2f4fb5" stroke-width="1.7" fill="none"/><path d="M697,319.4 L713.4,319.4 L713.4,303.7 L745.4,303.7" stroke="#2aa6a6" stroke-width="1.7" fill="none"/><circle cx="684.8" cy="319.4" r="4.6" fill="#7a7a7a" stroke="#444" stroke-width="0.6"/><rect x="684.8" y="314.79999999999995" width="5" height="3" fill="#7a7a7a" stroke="#444" stroke-width="0.5"/><circle cx="684.8" cy="319.4" r="2.1" fill="none" stroke="#dcdcdc" stroke-width="0.9"/><rect x="681.8" y="323.2" width="6" height="1.6" fill="#7a7a7a"/><path d="M722.5,303.7 H730.5" stroke="#2f4fb5" stroke-width="1.4"/><path d="M722.9,300.9 L729.3,303.7 L722.9,306.5 Z M729.8,300.7 V306.7" stroke="#2f4fb5" stroke-width="1.1" fill="#fff"/><circle cx="624.9" cy="319.4" r="1.6" fill="#111"/><circle cx="672.9" cy="319.4" r="1.6" fill="#111"/><circle cx="697" cy="319.4" r="1.6" fill="#111"/><circle cx="713.4" cy="303.7" r="1.6" fill="#111"/><circle cx="745.4" cy="303.7" r="1.6" fill="#111"/><text x="687.5" y="329.9" font-size="4.8" font-family="Liberation Mono" fill="#333" text-anchor="middle" letter-spacing="0.3">23-P102B</text><text x="648" y="317.79999999999995" font-size="4.2" font-family="Liberation Sans" fill="#6b6bff" text-anchor="middle">20.00</text><text x="705" y="317.79999999999995" font-size="4.2" font-family="Liberation Sans" fill="#6b6bff" text-anchor="middle">20.00</text><text x="728" y="301.5" font-size="4.2" font-family="Liberation Sans" fill="#6b6bff" text-anchor="middle">20.00</text><text x="626.4" y="324.9" font-size="4.2" font-family="Liberation Sans" fill="#6b6bff" text-anchor="middle">N3</text><text x="672.9" y="324.9" font-size="4.2" font-family="Liberation Sans" fill="#6b6bff" text-anchor="middle">N9</text><text x="699" y="324.9" font-size="4.2" font-family="Liberation Sans" fill="#6b6bff" text-anchor="middle">N15</text><text x="717" y="309.2" font-size="4.2" font-family="Liberation Sans" fill="#6b6bff" text-anchor="middle">N13</text><text x="748" y="309.2" font-size="4.2" font-family="Liberation Sans" fill="#6b6bff" text-anchor="middle">N20</text><text x="710.5" y="311.54999999999995" font-size="4.2" font-family="Liberation Sans" fill="#6b6bff" text-anchor="middle" transform="rotate(-90 710.5 311.54999999999995)">10.00</text><path d="M624.9,367.2 L672.9,367.2" stroke="#2aa6a6" stroke-width="1.7" fill="none"/><path d="M672.9,367.2 L697,367.2" stroke="#2f4fb5" stroke-width="1.7" fill="none"/><path d="M697,367.2 L713.4,367.2 L713.4,351.6 L745.4,351.6" stroke="#2aa6a6" stroke-width="1.7" fill="none"/><circle cx="684.8" cy="367.2" r="4.6" fill="#7a7a7a" stroke="#444" stroke-width="0.6"/><rect x="684.8" y="362.59999999999997" width="5" height="3" fill="#7a7a7a" stroke="#444" stroke-width="0.5"/><circle cx="684.8" cy="367.2" r="2.1" fill="none" stroke="#dcdcdc" stroke-width="0.9"/><rect x="681.8" y="371.0" width="6" height="1.6" fill="#7a7a7a"/><path d="M722.5,351.6 H730.5" stroke="#2f4fb5" stroke-width="1.4"/><path d="M722.9,348.8 L729.3,351.6 L722.9,354.40000000000003 Z M729.8,348.6 V354.6" stroke="#2f4fb5" stroke-width="1.1" fill="#fff"/><circle cx="624.9" cy="367.2" r="1.6" fill="#111"/><circle cx="672.9" cy="367.2" r="1.6" fill="#111"/><circle cx="697" cy="367.2" r="1.6" fill="#111"/><circle cx="713.4" cy="351.6" r="1.6" fill="#111"/><circle cx="745.4" cy="351.6" r="1.6" fill="#111"/><text x="687.5" y="377.7" font-size="4.8" font-family="Liberation Mono" fill="#333" text-anchor="middle" letter-spacing="0.3">23-P102C</text><text x="648" y="365.59999999999997" font-size="4.2" font-family="Liberation Sans" fill="#6b6bff" text-anchor="middle">20.00</text><text x="705" y="365.59999999999997" font-size="4.2" font-family="Liberation Sans" fill="#6b6bff" text-anchor="middle">20.00</text><text x="728" y="349.40000000000003" font-size="4.2" font-family="Liberation Sans" fill="#6b6bff" text-anchor="middle">20.00</text><text x="626.4" y="372.7" font-size="4.2" font-family="Liberation Sans" fill="#6b6bff" text-anchor="middle">N4</text><text x="672.9" y="372.7" font-size="4.2" font-family="Liberation Sans" fill="#6b6bff" text-anchor="middle">N9</text><text x="699" y="372.7" font-size="4.2" font-family="Liberation Sans" fill="#6b6bff" text-anchor="middle">N15</text><text x="717" y="357.1" font-size="4.2" font-family="Liberation Sans" fill="#6b6bff" text-anchor="middle">N13</text><text x="748" y="357.1" font-size="4.2" font-family="Liberation Sans" fill="#6b6bff" text-anchor="middle">N20</text><text x="710.5" y="359.4" font-size="4.2" font-family="Liberation Sans" fill="#6b6bff" text-anchor="middle" transform="rotate(-90 710.5 359.4)">10.00</text><path d="M624.9,399.5 L672.9,399.5" stroke="#2aa6a6" stroke-width="1.7" fill="none"/><path d="M672.9,399.5 L697,399.5" stroke="#2f4fb5" stroke-width="1.7" fill="none"/><path d="M697,399.5 L713.4,399.5 L713.4,383.7 L745.4,383.7" stroke="#2aa6a6" stroke-width="1.7" fill="none"/><circle cx="684.8" cy="399.5" r="4.6" fill="#7a7a7a" stroke="#444" stroke-width="0.6"/><rect x="684.8" y="394.9" width="5" height="3" fill="#7a7a7a" stroke="#444" stroke-width="0.5"/><circle cx="684.8" cy="399.5" r="2.1" fill="none" stroke="#dcdcdc" stroke-width="0.9"/><rect x="681.8" y="403.3" width="6" height="1.6" fill="#7a7a7a"/><path d="M722.5,383.7 H730.5" stroke="#2f4fb5" stroke-width="1.4"/><path d="M722.9,380.9 L729.3,383.7 L722.9,386.5 Z M729.8,380.7 V386.7" stroke="#2f4fb5" stroke-width="1.1" fill="#fff"/><circle cx="624.9" cy="399.5" r="1.6" fill="#111"/><circle cx="672.9" cy="399.5" r="1.6" fill="#111"/><circle cx="697" cy="399.5" r="1.6" fill="#111"/><circle cx="713.4" cy="383.7" r="1.6" fill="#111"/><circle cx="745.4" cy="383.7" r="1.6" fill="#111"/><text x="687.5" y="410.0" font-size="4.8" font-family="Liberation Mono" fill="#333" text-anchor="middle" letter-spacing="0.3">23-P102D</text><text x="648" y="397.9" font-size="4.2" font-family="Liberation Sans" fill="#6b6bff" text-anchor="middle">20.00</text><text x="705" y="397.9" font-size="4.2" font-family="Liberation Sans" fill="#6b6bff" text-anchor="middle">20.00</text><text x="728" y="381.5" font-size="4.2" font-family="Liberation Sans" fill="#6b6bff" text-anchor="middle">20.00</text><text x="626.4" y="405.0" font-size="4.2" font-family="Liberation Sans" fill="#6b6bff" text-anchor="middle">N5</text><text x="672.9" y="405.0" font-size="4.2" font-family="Liberation Sans" fill="#6b6bff" text-anchor="middle">N9</text><text x="699" y="405.0" font-size="4.2" font-family="Liberation Sans" fill="#6b6bff" text-anchor="middle">N15</text><text x="717" y="389.2" font-size="4.2" font-family="Liberation Sans" fill="#6b6bff" text-anchor="middle">N13</text><text x="748" y="389.2" font-size="4.2" font-family="Liberation Sans" fill="#6b6bff" text-anchor="middle">N20</text><text x="710.5" y="391.6" font-size="4.2" font-family="Liberation Sans" fill="#6b6bff" text-anchor="middle" transform="rotate(-90 710.5 391.6)">10.00</text><path d="M624.9,439.1 L672.9,439.1" stroke="#2aa6a6" stroke-width="1.7" fill="none"/><path d="M672.9,439.1 L697,439.1" stroke="#2f4fb5" stroke-width="1.7" fill="none"/><path d="M697,439.1 L713.4,439.1 L713.4,423.5 L745.4,423.5" stroke="#2aa6a6" stroke-width="1.7" fill="none"/><circle cx="684.8" cy="439.1" r="4.6" fill="#c8c8c8" stroke="#bbb" stroke-width="0.6"/><rect x="684.8" y="434.5" width="5" height="3" fill="#c8c8c8" stroke="#bbb" stroke-width="0.5"/><circle cx="684.8" cy="439.1" r="2.1" fill="none" stroke="#e6e6e6" stroke-width="0.9"/><rect x="681.8" y="442.90000000000003" width="6" height="1.6" fill="#c8c8c8"/><path d="M722.5,423.5 H730.5" stroke="#2f4fb5" stroke-width="1.4"/><path d="M722.9,420.7 L729.3,423.5 L722.9,426.3 Z M729.8,420.5 V426.5" stroke="#2f4fb5" stroke-width="1.1" fill="#fff"/><circle cx="624.9" cy="439.1" r="1.6" fill="#111"/><circle cx="672.9" cy="439.1" r="1.6" fill="#111"/><circle cx="697" cy="439.1" r="1.6" fill="#111"/><circle cx="713.4" cy="423.5" r="1.6" fill="#111"/><circle cx="745.4" cy="423.5" r="1.6" fill="#111"/><text x="687.5" y="449.6" font-size="4.8" font-family="Liberation Mono" fill="#333" text-anchor="middle" letter-spacing="0.3">23-P102E</text><text x="648" y="437.5" font-size="4.2" font-family="Liberation Sans" fill="#6b6bff" text-anchor="middle">0</text><text x="705" y="437.5" font-size="4.2" font-family="Liberation Sans" fill="#6b6bff" text-anchor="middle">0</text><text x="728" y="421.3" font-size="4.2" font-family="Liberation Sans" fill="#6b6bff" text-anchor="middle"></text><text x="626.4" y="444.6" font-size="4.2" font-family="Liberation Sans" fill="#6b6bff" text-anchor="middle">N6</text><text x="672.9" y="444.6" font-size="4.2" font-family="Liberation Sans" fill="#6b6bff" text-anchor="middle">N9</text><text x="699" y="444.6" font-size="4.2" font-family="Liberation Sans" fill="#6b6bff" text-anchor="middle">N15</text><text x="717" y="429.0" font-size="4.2" font-family="Liberation Sans" fill="#6b6bff" text-anchor="middle">N13</text><text x="748" y="429.0" font-size="4.2" font-family="Liberation Sans" fill="#6b6bff" text-anchor="middle">N20</text><text x="710.5" y="431.3" font-size="4.2" font-family="Liberation Sans" fill="#6b6bff" text-anchor="middle" transform="rotate(-90 710.5 431.3)">0</text><text x="622" y="300" font-size="4.2" font-family="Liberation Sans" fill="#6b6bff" text-anchor="middle" transform="rotate(-90 622 300)">20.00</text><text x="622" y="343" font-size="4.2" font-family="Liberation Sans" fill="#6b6bff" text-anchor="middle" transform="rotate(-90 622 343)">40.00</text><text x="622" y="384" font-size="4.2" font-family="Liberation Sans" fill="#6b6bff" text-anchor="middle" transform="rotate(-90 622 384)">20.00</text><text x="622" y="420" font-size="4.2" font-family="Liberation Sans" fill="#6b6bff" text-anchor="middle" transform="rotate(-90 622 420)">0</text><path d="M537,367.2 L624.9,367.2" stroke="#ee33ee" stroke-width="1.7" fill="none"/><path d="M537,352 L537,367.2" stroke="#2f4fb5" stroke-width="1.4" fill="none"/><rect x="532.5" y="343" width="9" height="12" rx="1.5" fill="#888" stroke="#333" stroke-width="0.6"/><rect x="533.5" y="344" width="3" height="10" fill="#bbb"/><circle cx="537" cy="367.2" r="1.6" fill="#111"/><text x="539" y="339.5" font-size="5" font-family="Liberation Mono" fill="#333" text-anchor="middle">23-T-102</text><text x="580" y="365.6" font-size="4.2" font-family="Liberation Sans" fill="#6b6bff" text-anchor="middle">80.00</text><text x="539" y="372.5" font-size="4.2" font-family="Liberation Sans" fill="#6b6bff" text-anchor="middle">N1</text><text x="743.5" y="231" font-size="4.2" font-family="Liberation Sans" fill="#6b6bff" text-anchor="middle" transform="rotate(-90 743.5 231)">40.00</text><text x="743.5" y="284" font-size="4.2" font-family="Liberation Sans" fill="#6b6bff" text-anchor="middle" transform="rotate(-90 743.5 284)">20.00</text><text x="743.5" y="328" font-size="4.2" font-family="Liberation Sans" fill="#6b6bff" text-anchor="middle" transform="rotate(-90 743.5 328)">0.000</text><text x="743.5" y="368" font-size="4.2" font-family="Liberation Sans" fill="#6b6bff" text-anchor="middle" transform="rotate(-90 743.5 368)">20.00</text><text x="743.5" y="404" font-size="4.2" font-family="Liberation Sans" fill="#6b6bff" text-anchor="middle" transform="rotate(-90 743.5 404)">30.00</text><text x="743.5" y="460" font-size="4.2" font-family="Liberation Sans" fill="#6b6bff" text-anchor="middle" transform="rotate(-90 743.5 460)">20.04</text><text x="785" y="198" font-size="4.2" font-family="Liberation Sans" fill="#6b6bff" text-anchor="middle">40.00</text><text x="905" y="198" font-size="4.2" font-family="Liberation Sans" fill="#6b6bff" text-anchor="middle">40.00</text><text x="785" y="493.3" font-size="4.2" font-family="Liberation Sans" fill="#6b6bff" text-anchor="middle">20.02</text><text x="905" y="493.3" font-size="4.2" font-family="Liberation Sans" fill="#6b6bff" text-anchor="middle">20.02</text><circle cx="825" cy="199.6" r="1.6" fill="#111"/><circle cx="825" cy="494.9" r="1.6" fill="#111"/><text x="825" y="205" font-size="4.2" font-family="Liberation Sans" fill="#6b6bff" text-anchor="middle">N18</text><text x="825" y="500" font-size="4.2" font-family="Liberation Sans" fill="#6b6bff" text-anchor="middle">N17</text><text x="983.5" y="252" font-size="4.2" font-family="Liberation Sans" fill="#6b6bff" text-anchor="middle" transform="rotate(-90 983.5 252)">40.00</text><text x="983.5" y="438" font-size="4.2" font-family="Liberation Sans" fill="#6b6bff" text-anchor="middle" transform="rotate(-90 983.5 438)">20.04</text><path d="M800.6,343.3 L849.5,343.3" stroke="#f03a3a" stroke-width="1.7" fill="none"/><path d="M849.5,343.3 L849.5,319.3 L873.2,319.3" stroke="#33dd33" stroke-width="1.7" fill="none"/><path d="M897.4,319.3 L921.4,319.3 L921.4,343.3" stroke="#33dd33" stroke-width="1.7" fill="none"/><path d="M849.5,343.3 L873.2,343.3" stroke="#33dd33" stroke-width="1.7" fill="none"/><path d="M897.4,343.3 L921.4,343.3" stroke="#33dd33" stroke-width="1.7" fill="none"/><path d="M849.5,343.3 L849.5,367.2 L873.2,367.2" stroke="#2aa6a6" stroke-width="1.7" fill="none"/><path d="M897.4,367.2 L921.4,367.2 L921.4,343.3" stroke="#2aa6a6" stroke-width="1.7" fill="none"/><path d="M873.2,319.3 L897.4,319.3" stroke="#2f4fb5" stroke-width="1.7" fill="none"/><circle cx="885.9" cy="319.3" r="4.6" fill="#7a7a7a" stroke="#444" stroke-width="0.6"/><rect x="885.9" y="314.7" width="5" height="3" fill="#7a7a7a" stroke="#444" stroke-width="0.5"/><circle cx="885.9" cy="319.3" r="2.1" fill="none" stroke="#dcdcdc" stroke-width="0.9"/><rect x="882.9" y="323.1" width="6" height="1.6" fill="#7a7a7a"/><circle cx="873.2" cy="319.3" r="1.6" fill="#111"/><circle cx="897.4" cy="319.3" r="1.6" fill="#111"/><circle cx="849.5" cy="319.3" r="1.6" fill="#111"/><text x="860" y="317.5" font-size="4.2" font-family="Liberation Sans" fill="#6b6bff" text-anchor="middle">22.00</text><text x="910" y="317.5" font-size="4.2" font-family="Liberation Sans" fill="#6b6bff" text-anchor="middle">22.00</text><text x="873" y="324.8" font-size="4.2" font-family="Liberation Sans" fill="#6b6bff" text-anchor="middle">N41</text><text x="899" y="324.8" font-size="4.2" font-family="Liberation Sans" fill="#6b6bff" text-anchor="middle">N44</text><text x="851" y="324.8" font-size="4.2" font-family="Liberation Sans" fill="#6b6bff" text-anchor="middle">N39</text><path d="M873.2,343.3 L897.4,343.3" stroke="#2f4fb5" stroke-width="1.7" fill="none"/><circle cx="885.9" cy="343.3" r="4.6" fill="#7a7a7a" stroke="#444" stroke-width="0.6"/><rect x="885.9" y="338.7" width="5" height="3" fill="#7a7a7a" stroke="#444" stroke-width="0.5"/><circle cx="885.9" cy="343.3" r="2.1" fill="none" stroke="#dcdcdc" stroke-width="0.9"/><rect x="882.9" y="347.1" width="6" height="1.6" fill="#7a7a7a"/><circle cx="873.2" cy="343.3" r="1.6" fill="#111"/><circle cx="897.4" cy="343.3" r="1.6" fill="#111"/><circle cx="849.5" cy="343.3" r="1.6" fill="#111"/><text x="860" y="341.5" font-size="4.2" font-family="Liberation Sans" fill="#6b6bff" text-anchor="middle">22.00</text><text x="910" y="341.5" font-size="4.2" font-family="Liberation Sans" fill="#6b6bff" text-anchor="middle">22.00</text><text x="873" y="348.8" font-size="4.2" font-family="Liberation Sans" fill="#6b6bff" text-anchor="middle">N41</text><text x="899" y="348.8" font-size="4.2" font-family="Liberation Sans" fill="#6b6bff" text-anchor="middle">N44</text><text x="851" y="348.8" font-size="4.2" font-family="Liberation Sans" fill="#6b6bff" text-anchor="middle">N39</text><path d="M873.2,367.2 L897.4,367.2" stroke="#2f4fb5" stroke-width="1.7" fill="none"/><circle cx="885.9" cy="367.2" r="4.6" fill="#c8c8c8" stroke="#bbb" stroke-width="0.6"/><rect x="885.9" y="362.59999999999997" width="5" height="3" fill="#c8c8c8" stroke="#bbb" stroke-width="0.5"/><circle cx="885.9" cy="367.2" r="2.1" fill="none" stroke="#e6e6e6" stroke-width="0.9"/><rect x="882.9" y="371.0" width="6" height="1.6" fill="#c8c8c8"/><circle cx="873.2" cy="367.2" r="1.6" fill="#111"/><circle cx="897.4" cy="367.2" r="1.6" fill="#111"/><circle cx="849.5" cy="367.2" r="1.6" fill="#111"/><text x="860" y="365.4" font-size="4.2" font-family="Liberation Sans" fill="#6b6bff" text-anchor="middle">0</text><text x="910" y="365.4" font-size="4.2" font-family="Liberation Sans" fill="#6b6bff" text-anchor="middle">0</text><text x="873" y="372.7" font-size="4.2" font-family="Liberation Sans" fill="#6b6bff" text-anchor="middle">N41</text><text x="899" y="372.7" font-size="4.2" font-family="Liberation Sans" fill="#6b6bff" text-anchor="middle">N44</text><text x="851" y="372.7" font-size="4.2" font-family="Liberation Sans" fill="#6b6bff" text-anchor="middle">N39</text><circle cx="921.4" cy="343.3" r="1.6" fill="#111"/><text x="847.5" y="331" font-size="4.2" font-family="Liberation Sans" fill="#6b6bff" text-anchor="middle" transform="rotate(-90 847.5 331)">22.00</text><text x="919.5" y="331" font-size="4.2" font-family="Liberation Sans" fill="#6b6bff" text-anchor="middle" transform="rotate(-90 919.5 331)">22.00</text><text x="847.5" y="355" font-size="4.2" font-family="Liberation Sans" fill="#6b6bff" text-anchor="middle" transform="rotate(-90 847.5 355)">0</text><text x="919.5" y="355" font-size="4.2" font-family="Liberation Sans" fill="#6b6bff" text-anchor="middle" transform="rotate(-90 919.5 355)">0</text><path d="M921.4,343.3 L945,343.3" stroke="#f03a3a" stroke-width="1.7" fill="none"/><path d="M945,343.3 L1008.5,343.3" stroke="#ee33ee" stroke-width="1.7" fill="none"/><path d="M945,343.3 L945,405" stroke="#ee33ee" stroke-width="1.7" fill="none"/><circle cx="800.6" cy="343.3" r="3" fill="#fff" stroke="#111" stroke-width="1.5"/><path d="M799.3000000000001,341.7 L802.0,343.3 L799.3000000000001,344.90000000000003 Z" fill="#111"/><circle cx="945" cy="407.8" r="3" fill="#fff" stroke="#111" stroke-width="1.5"/><path d="M943.7,406.2 L946.4,407.8 L943.7,409.40000000000003 Z" fill="#111"/><circle cx="945" cy="343.3" r="1.6" fill="#111"/><text x="825" y="341.6" font-size="4.2" font-family="Liberation Sans" fill="#6b6bff" text-anchor="middle">44.00</text><text x="933" y="341.6" font-size="4.2" font-family="Liberation Sans" fill="#6b6bff" text-anchor="middle">44.00</text><text x="975" y="341.6" font-size="4.2" font-family="Liberation Sans" fill="#6b6bff" text-anchor="middle">88.00</text><text x="943" y="376" font-size="4.2" font-family="Liberation Sans" fill="#6b6bff" text-anchor="middle" transform="rotate(-90 943 376)">42.00</text><text x="801" y="349.5" font-size="4.2" font-family="Liberation Sans" fill="#6b6bff" text-anchor="middle">N37</text><text x="946" y="349.5" font-size="4.2" font-family="Liberation Sans" fill="#6b6bff" text-anchor="middle">N48</text><text x="946" y="414" font-size="4.2" font-family="Liberation Sans" fill="#6b6bff" text-anchor="middle">N45</text><path d="M1008.5,343.3 L1008.5,319.2 L1080.6,319.2 L1080.6,303.7" stroke="#f03a3a" stroke-width="1.7" fill="none"/><path d="M1008.5,343.3 L1008.5,367.3 L1080.6,367.3" stroke="#f03a3a" stroke-width="1.7" fill="none"/><path d="M1080.6,367.3 L1080.6,383.6" stroke="#ee33ee" stroke-width="1.7" fill="none"/><path d="M1020.7,319.2 H1032.7" stroke="#fff" stroke-width="2.4"/><path d="M1021.7,316.2 L1031.7,322.2 V316.2 L1021.7,322.2 Z" stroke="#2aa6a6" stroke-width="1.1" fill="#fff"/><path d="M1054,319.2 H1066" stroke="#fff" stroke-width="2.4"/><path d="M1055,316.2 L1065,322.2 V316.2 L1055,322.2 Z" stroke="#2aa6a6" stroke-width="1.1" fill="#fff"/><path d="M1020.7,367.3 H1032.7" stroke="#fff" stroke-width="2.4"/><path d="M1021.7,364.3 L1031.7,370.3 V364.3 L1021.7,370.3 Z" stroke="#2aa6a6" stroke-width="1.1" fill="#fff"/><path d="M1054,367.3 H1066" stroke="#fff" stroke-width="2.4"/><path d="M1055,364.3 L1065,370.3 V364.3 L1055,370.3 Z" stroke="#2aa6a6" stroke-width="1.1" fill="#fff"/><circle cx="1008.5" cy="343.3" r="1.6" fill="#111"/><circle cx="1080.6" cy="303.7" r="1.6" fill="#111"/><circle cx="1080.6" cy="383.6" r="1.6" fill="#111"/><path d="M1080.6,303.7 L1200.4,303.7" stroke="#ee33ee" stroke-width="1.7" fill="none"/><path d="M1200.4,303.7 L1233,303.7" stroke="#2f4fb5" stroke-width="1.7" fill="none"/><path d="M1233,303.7 L1262,303.7" stroke="#ee33ee" stroke-width="1.7" fill="none"/><path d="M1210.7,303.7 H1222.7" stroke="#fff" stroke-width="2.4"/><path d="M1211.7,300.7 L1221.7,306.7 V300.7 L1211.7,306.7 Z" stroke="#555" stroke-width="1.1" fill="#fff"/><rect x="1214.5" y="297.7" width="4" height="2.5" fill="#555"/><circle cx="1200.4" cy="303.7" r="1.6" fill="#111"/><circle cx="1233" cy="303.7" r="1.6" fill="#111"/><circle cx="1264.4" cy="303.7" r="3" fill="#fff" stroke="#111" stroke-width="1.5"/><path d="M1263.1000000000001,302.09999999999997 L1265.8000000000002,303.7 L1263.1000000000001,305.3 Z" fill="#111"/><text x="1138" y="301.9" font-size="4.2" font-family="Liberation Sans" fill="#6b6bff" text-anchor="middle">65.34</text><text x="1249" y="301.9" font-size="4.2" font-family="Liberation Sans" fill="#6b6bff" text-anchor="middle">65.34</text><text x="1200" y="309.2" font-size="4.2" font-family="Liberation Sans" fill="#6b6bff" text-anchor="middle">N31</text><text x="1234" y="309.2" font-size="4.2" font-family="Liberation Sans" fill="#6b6bff" text-anchor="middle">N33</text><text x="1264" y="310.2" font-size="4.2" font-family="Liberation Sans" fill="#6b6bff" text-anchor="middle">N35</text><path d="M1080.6,383.6 L1200.4,383.6" stroke="#ee33ee" stroke-width="1.7" fill="none"/><path d="M1200.4,383.6 L1233,383.6" stroke="#2f4fb5" stroke-width="1.7" fill="none"/><path d="M1233,383.6 L1262,383.6" stroke="#ee33ee" stroke-width="1.7" fill="none"/><path d="M1210.7,383.6 H1222.7" stroke="#fff" stroke-width="2.4"/><path d="M1211.7,380.6 L1221.7,386.6 V380.6 L1211.7,386.6 Z" stroke="#555" stroke-width="1.1" fill="#fff"/><rect x="1214.5" y="377.6" width="4" height="2.5" fill="#555"/><circle cx="1200.4" cy="383.6" r="1.6" fill="#111"/><circle cx="1233" cy="383.6" r="1.6" fill="#111"/><circle cx="1264.4" cy="383.6" r="3" fill="#fff" stroke="#111" stroke-width="1.5"/><path d="M1263.1000000000001,382.0 L1265.8000000000002,383.6 L1263.1000000000001,385.20000000000005 Z" fill="#111"/><text x="1138" y="381.8" font-size="4.2" font-family="Liberation Sans" fill="#6b6bff" text-anchor="middle">82.00</text><text x="1249" y="381.8" font-size="4.2" font-family="Liberation Sans" fill="#6b6bff" text-anchor="middle">82.00</text><text x="1200" y="389.1" font-size="4.2" font-family="Liberation Sans" fill="#6b6bff" text-anchor="middle">N31</text><text x="1234" y="389.1" font-size="4.2" font-family="Liberation Sans" fill="#6b6bff" text-anchor="middle">N33</text><text x="1264" y="390.1" font-size="4.2" font-family="Liberation Sans" fill="#6b6bff" text-anchor="middle">N35</text><text x="1033" y="302" font-size="4.2" font-family="Liberation Sans" fill="#6b6bff" text-anchor="middle">40.00</text><text x="1033" y="382" font-size="4.2" font-family="Liberation Sans" fill="#6b6bff" text-anchor="middle">39.21</text><text x="1044" y="317.5" font-size="4.2" font-family="Liberation Sans" fill="#6b6bff" text-anchor="middle">44.35</text><text x="1044" y="365.6" font-size="4.2" font-family="Liberation Sans" fill="#6b6bff" text-anchor="middle">44.55</text><text x="1006.5" y="331" font-size="4.2" font-family="Liberation Sans" fill="#6b6bff" text-anchor="middle" transform="rotate(-90 1006.5 331)">44.35</text><text x="1006.5" y="355" font-size="4.2" font-family="Liberation Sans" fill="#6b6bff" text-anchor="middle" transform="rotate(-90 1006.5 355)">44.45</text><text x="1078.5" y="311" font-size="4.2" font-family="Liberation Sans" fill="#6b6bff" text-anchor="middle" transform="rotate(-90 1078.5 311)">44.00</text><text x="1078.5" y="375" font-size="4.2" font-family="Liberation Sans" fill="#6b6bff" text-anchor="middle" transform="rotate(-90 1078.5 375)">44.00</text><text x="993" y="235.8" font-size="4.3" font-family="Liberation Sans" font-weight="bold" fill="#222">NODE 26-24</text><text x="1001" y="453.5" font-size="4.3" font-family="Liberation Sans" font-weight="bold" fill="#222">NODE 35-45</text></svg><div class="a" style="left:526px;top:526px;width:769px;height:16px;background:#ebebed;"></div><div class="a" style="left:601px;top:527px;width:78px;height:15px;background:#d3d7db;"></div><svg class="a" style="left:0px;top:0px;overflow:visible" width="1920" height="851" viewBox="0 0 1920 851"><circle cx="533" cy="534.5" r="3.8" fill="#e8414a"/><path d="M531.3,532.8 l3.4,3.4 M534.7,532.8 l-3.4,3.4" stroke="#fff" stroke-width="0.9"/><path d="M603.8,538 L607.5,530.8 L611.2,538 Z" fill="#f5b400"/><path d="M607.5,533 v2.8 M607.5,536.6 v0.6" stroke="#333" stroke-width="0.8"/></svg><div class="t" style="left:541px;top:530.04px;font-size:9.101123595505618px;color:#222;transform:scaleX(0.890);transform-origin:0 0;-webkit-text-stroke:0.255px #222;">Errors (6)</div><div class="t" style="left:614.5px;top:530.04px;font-size:9.101123595505618px;color:#222;transform:scaleX(0.890);transform-origin:0 0;-webkit-text-stroke:0.255px #222;">Warnings (3)</div><div class="a" style="left:526px;top:542px;width:757px;height:114px;background:#fdfdfd;"></div><div class="a" style="left:526px;top:525.5px;width:769px;height:1px;background:#d6d6d8;"></div><div class="a" style="left:526px;top:542px;width:769px;height:1.5px;background:#d9d9db;"></div><div class="a" style="left:527px;top:544px;width:756px;height:18px;background:linear-gradient(180deg,#e9eaef,#d9dae1);"></div><div class="a" style="left:527px;top:562px;width:756px;height:1px;background:#c9cad0;"></div><div class="a" style="left:543px;top:544px;width:1px;height:18px;background:#c8c9cf;"></div><div class="a" style="left:595px;top:544px;width:1px;height:18px;background:#c8c9cf;"></div><div class="t" style="left:545px;top:548.54px;font-size:9.101123595505618px;color:#111;transform:scaleX(0.890);transform-origin:0 0;-webkit-text-stroke:0.255px #111;">Element</div><div class="t" style="left:596px;top:548.54px;font-size:9.101123595505618px;color:#111;transform:scaleX(0.890);transform-origin:0 0;-webkit-text-stroke:0.255px #111;">State</div><div class="a" style="left:527px;top:563px;width:756px;height:18px;background:#fdfdfd;border-bottom:1px solid #e6e6e8;box-sizing:border-box;"></div><div class="a" style="left:543px;top:563px;width:1px;height:18px;background:#e3e3e5;"></div><div class="a" style="left:595px;top:563px;width:1px;height:18px;background:#e3e3e5;"></div><svg class="a" style="left:0px;top:0px;overflow:visible" width="1920" height="851" viewBox="0 0 1920 851"><path d="M532,575.4 L535.5,568.6 L539,575.4 Z" fill="#f5b400"/><path d="M535.5,570.8 v2.6" stroke="#333" stroke-width="0.8"/></svg><div class="t" style="left:545.5px;top:567.54px;font-size:9.101123595505618px;color:#111;transform:scaleX(0.890);transform-origin:0 0;-webkit-text-stroke:0.255px #111;">Pump6</div><div class="t" style="left:596px;top:567.54px;font-size:9.101123595505618px;color:#111;transform:scaleX(0.890);transform-origin:0 0;-webkit-text-stroke:0.255px #111;">NPSHa seems to be low</div><div class="a" style="left:527px;top:581px;width:756px;height:18px;background:#f4f4f5;border-bottom:1px solid #e6e6e8;box-sizing:border-box;"></div><div class="a" style="left:543px;top:581px;width:1px;height:18px;background:#e3e3e5;"></div><div class="a" style="left:595px;top:581px;width:1px;height:18px;background:#e3e3e5;"></div><svg class="a" style="left:0px;top:0px;overflow:visible" width="1920" height="851" viewBox="0 0 1920 851"><path d="M532,593.4 L535.5,586.6 L539,593.4 Z" fill="#f5b400"/><path d="M535.5,588.8 v2.6" stroke="#333" stroke-width="0.8"/></svg><div class="t" style="left:545.5px;top:585.54px;font-size:9.101123595505618px;color:#111;transform:scaleX(0.890);transform-origin:0 0;-webkit-text-stroke:0.255px #111;">Pump7</div><div class="t" style="left:596px;top:585.54px;font-size:9.101123595505618px;color:#111;transform:scaleX(0.890);transform-origin:0 0;-webkit-text-stroke:0.255px #111;">NPSHa seems to be low</div><div class="a" style="left:527px;top:599px;width:756px;height:18px;background:#fdfdfd;border-bottom:1px solid #e6e6e8;box-sizing:border-box;"></div><div class="a" style="left:543px;top:599px;width:1px;height:18px;background:#e3e3e5;"></div><div class="a" style="left:595px;top:599px;width:1px;height:18px;background:#e3e3e5;"></div><svg class="a" style="left:0px;top:0px;overflow:visible" width="1920" height="851" viewBox="0 0 1920 851"><path d="M532,611.4 L535.5,604.6 L539,611.4 Z" fill="#f5b400"/><path d="M535.5,606.8 v2.6" stroke="#333" stroke-width="0.8"/></svg><div class="t" style="left:545.5px;top:603.54px;font-size:9.101123595505618px;color:#111;transform:scaleX(0.890);transform-origin:0 0;-webkit-text-stroke:0.255px #111;">Pump8</div><div class="t" style="left:596px;top:603.54px;font-size:9.101123595505618px;color:#111;transform:scaleX(0.890);transform-origin:0 0;-webkit-text-stroke:0.255px #111;">NPSHa seems to be low</div><div class="a" style="left:1283px;top:542px;width:12px;height:126px;background:#f0f0f0;"></div><div class="a" style="left:526px;top:656px;width:757px;height:12px;background:#efeff1;"></div><div class="a" style="left:1295px;top:111px;width:4px;height:557px;background:#e7e7ea;"></div><div class="a" style="left:1297px;top:111px;width:1px;height:557px;background:#c6c7ca;"></div><div class="a" style="left:1298px;top:111px;width:164px;height:557px;background:#f7f7f9;"></div><div class="a" style="left:1462px;top:111px;width:4px;height:557px;background:#e6e6e8;"></div><div class="t" style="left:1301px;top:117.54px;font-size:9.101123595505618px;color:#111;transform:scaleX(0.890);transform-origin:0 0;-webkit-text-stroke:0.255px #111;">Link parameters</div><div class="a" style="left:1301px;top:133px;width:161px;height:1px;background:#d4d5d9;"></div><div class="a" style="left:1301px;top:133.4px;width:161px;height:18.099999999999994px;background:linear-gradient(180deg,#e8e9ee,#d5d6dd);"></div><div class="a" style="left:1370px;top:133.4px;width:1px;height:18.099999999999994px;background:#c5c6cc;"></div><div class="a" style="left:1432px;top:133.4px;width:1px;height:18.099999999999994px;background:#c5c6cc;"></div><div class="t" style="left:1305px;top:137.99px;font-size:9.101123595505618px;color:#111;transform:scaleX(0.890);transform-origin:0 0;-webkit-text-stroke:0.255px #111;">Inputs</div><div class="a" style="left:1301px;top:151.5px;width:161px;height:15.77px;background:#f8f8fa;border-bottom:1px solid #e3e3e7;box-sizing:border-box;"></div><div class="a" style="left:1370px;top:151.5px;width:1px;height:15.77px;background:#e0e0e4;"></div><div class="a" style="left:1432px;top:151.5px;width:1px;height:15.77px;background:#e0e0e4;"></div><div class="t" style="left:1307.5px;top:154.93px;font-size:9.101123595505618px;color:#111;transform:scaleX(0.890);transform-origin:0 0;-webkit-text-stroke:0.255px #111;">Type</div><div class="t" style="left:1373px;top:154.93px;font-size:9.101123595505618px;color:#111;transform:scaleX(0.890);transform-origin:0 0;-webkit-text-stroke:0.255px #111;">Tank</div><div class="t" style="left:1435.5px;top:154.93px;font-size:9.101123595505618px;color:#111;transform:scaleX(0.890);transform-origin:0 0;-webkit-text-stroke:0.255px #111;"></div><div class="a" style="left:1301px;top:167.27px;width:161px;height:15.77px;background:#f8f8fa;border-bottom:1px solid #e3e3e7;box-sizing:border-box;"></div><div class="a" style="left:1370px;top:167.27px;width:1px;height:15.77px;background:#e0e0e4;"></div><div class="a" style="left:1432px;top:167.27px;width:1px;height:15.77px;background:#e0e0e4;"></div><div class="t" style="left:1307.5px;top:170.70px;font-size:9.101123595505618px;color:#111;transform:scaleX(0.890);transform-origin:0 0;-webkit-text-stroke:0.255px #111;">Name</div><div class="t" style="left:1373px;top:170.70px;font-size:9.101123595505618px;color:#111;transform:scaleX(0.890);transform-origin:0 0;-webkit-text-stroke:0.255px #111;">23-T-102</div><div class="t" style="left:1435.5px;top:170.70px;font-size:9.101123595505618px;color:#111;transform:scaleX(0.890);transform-origin:0 0;-webkit-text-stroke:0.255px #111;"></div><div class="a" style="left:1301px;top:183.04px;width:161px;height:15.77px;background:#f8f8fa;border-bottom:1px solid #e3e3e7;box-sizing:border-box;"></div><div class="a" style="left:1370px;top:183.04px;width:1px;height:15.77px;background:#e0e0e4;"></div><div class="a" style="left:1432px;top:183.04px;width:1px;height:15.77px;background:#e0e0e4;"></div><div class="t" style="left:1307.5px;top:186.47px;font-size:9.101123595505618px;color:#111;transform:scaleX(0.890);transform-origin:0 0;-webkit-text-stroke:0.255px #111;">Upstream node</div><div class="t" style="left:1373px;top:186.47px;font-size:9.101123595505618px;color:#111;transform:scaleX(0.890);transform-origin:0 0;-webkit-text-stroke:0.255px #111;">1</div><div class="t" style="left:1435.5px;top:186.47px;font-size:9.101123595505618px;color:#111;transform:scaleX(0.890);transform-origin:0 0;-webkit-text-stroke:0.255px #111;"></div><div class="a" style="left:1301px;top:198.81px;width:161px;height:15.77px;background:#f8f8fa;border-bottom:1px solid #e3e3e7;box-sizing:border-box;"></div><div class="a" style="left:1370px;top:198.81px;width:1px;height:15.77px;background:#e0e0e4;"></div><div class="a" style="left:1432px;top:198.81px;width:1px;height:15.77px;background:#e0e0e4;"></div><div class="t" style="left:1307.5px;top:202.24px;font-size:9.101123595505618px;color:#111;transform:scaleX(0.890);transform-origin:0 0;-webkit-text-stroke:0.255px #111;">Downstream n...</div><div class="t" style="left:1373px;top:202.24px;font-size:9.101123595505618px;color:#111;transform:scaleX(0.890);transform-origin:0 0;-webkit-text-stroke:0.255px #111;">2</div><div class="t" style="left:1435.5px;top:202.24px;font-size:9.101123595505618px;color:#111;transform:scaleX(0.890);transform-origin:0 0;-webkit-text-stroke:0.255px #111;"></div><div class="a" style="left:1301px;top:214.57999999999998px;width:161px;height:15.77px;background:#f8f8fa;border-bottom:1px solid #e3e3e7;box-sizing:border-box;"></div><div class="a" style="left:1370px;top:214.57999999999998px;width:1px;height:15.77px;background:#e0e0e4;"></div><div class="a" style="left:1432px;top:214.57999999999998px;width:1px;height:15.77px;background:#e0e0e4;"></div><div class="t" style="left:1307.5px;top:218.01px;font-size:9.101123595505618px;color:#111;transform:scaleX(0.890);transform-origin:0 0;-webkit-text-stroke:0.255px #111;">Length</div><div class="t" style="left:1373px;top:218.01px;font-size:9.101123595505618px;color:#111;transform:scaleX(0.890);transform-origin:0 0;-webkit-text-stroke:0.255px #111;">50.00</div><div class="t" style="left:1435.5px;top:218.01px;font-size:9.101123595505618px;color:#111;transform:scaleX(0.890);transform-origin:0 0;-webkit-text-stroke:0.255px #111;">m</div><div class="a" style="left:1301px;top:230.35px;width:161px;height:15.77px;background:#f8f8fa;border-bottom:1px solid #e3e3e7;box-sizing:border-box;"></div><div class="a" style="left:1370px;top:230.35px;width:1px;height:15.77px;background:#e0e0e4;"></div><div class="a" style="left:1432px;top:230.35px;width:1px;height:15.77px;background:#e0e0e4;"></div><div class="t" style="left:1307.5px;top:233.78px;font-size:9.101123595505618px;color:#111;transform:scaleX(0.890);transform-origin:0 0;-webkit-text-stroke:0.255px #111;">Nominal diam...</div><div class="t" style="left:1373px;top:233.78px;font-size:9.101123595505618px;color:#111;transform:scaleX(0.890);transform-origin:0 0;-webkit-text-stroke:0.255px #111;"></div><div class="t" style="left:1435.5px;top:233.78px;font-size:9.101123595505618px;color:#111;transform:scaleX(0.890);transform-origin:0 0;-webkit-text-stroke:0.255px #111;">in</div><div class="a" style="left:1301px;top:246.12px;width:161px;height:15.77px;background:#f8f8fa;border-bottom:1px solid #e3e3e7;box-sizing:border-box;"></div><div class="a" style="left:1370px;top:246.12px;width:1px;height:15.77px;background:#e0e0e4;"></div><div class="a" style="left:1432px;top:246.12px;width:1px;height:15.77px;background:#e0e0e4;"></div><div class="t" style="left:1307.5px;top:249.55px;font-size:9.101123595505618px;color:#111;transform:scaleX(0.890);transform-origin:0 0;-webkit-text-stroke:0.255px #111;">Inside diameter</div><div class="t" style="left:1373px;top:249.55px;font-size:9.101123595505618px;color:#111;transform:scaleX(0.890);transform-origin:0 0;-webkit-text-stroke:0.255px #111;">0.100</div><div class="t" style="left:1435.5px;top:249.55px;font-size:9.101123595505618px;color:#111;transform:scaleX(0.890);transform-origin:0 0;-webkit-text-stroke:0.255px #111;">m</div><div class="a" style="left:1301px;top:261.89px;width:161px;height:15.77px;background:#f8f8fa;border-bottom:1px solid #e3e3e7;box-sizing:border-box;"></div><div class="a" style="left:1370px;top:261.89px;width:1px;height:15.77px;background:#e0e0e4;"></div><div class="a" style="left:1432px;top:261.89px;width:1px;height:15.77px;background:#e0e0e4;"></div><div class="t" style="left:1307.5px;top:265.32px;font-size:9.101123595505618px;color:#111;transform:scaleX(0.890);transform-origin:0 0;-webkit-text-stroke:0.255px #111;">Roughness</div><div class="t" style="left:1373px;top:265.32px;font-size:9.101123595505618px;color:#111;transform:scaleX(0.890);transform-origin:0 0;-webkit-text-stroke:0.255px #111;">4.570E-5</div><div class="t" style="left:1435.5px;top:265.32px;font-size:9.101123595505618px;color:#111;transform:scaleX(0.890);transform-origin:0 0;-webkit-text-stroke:0.255px #111;">m</div><div class="a" style="left:1301px;top:277.65999999999997px;width:161px;height:15.77px;background:#f8f8fa;border-bottom:1px solid #e3e3e7;box-sizing:border-box;"></div><div class="a" style="left:1370px;top:277.65999999999997px;width:1px;height:15.77px;background:#e0e0e4;"></div><div class="a" style="left:1432px;top:277.65999999999997px;width:1px;height:15.77px;background:#e0e0e4;"></div><div class="t" style="left:1307.5px;top:281.09px;font-size:9.101123595505618px;color:#111;transform:scaleX(0.890);transform-origin:0 0;-webkit-text-stroke:0.255px #111;">Fittings K factor</div><div class="t" style="left:1373px;top:281.09px;font-size:9.101123595505618px;color:#111;transform:scaleX(0.890);transform-origin:0 0;-webkit-text-stroke:0.255px #111;">0</div><div class="t" style="left:1435.5px;top:281.09px;font-size:9.101123595505618px;color:#111;transform:scaleX(0.890);transform-origin:0 0;-webkit-text-stroke:0.255px #111;"></div><div class="a" style="left:1301px;top:293.43px;width:161px;height:15.77px;background:#f8f8fa;border-bottom:1px solid #e3e3e7;box-sizing:border-box;"></div><div class="a" style="left:1370px;top:293.43px;width:1px;height:15.77px;background:#e0e0e4;"></div><div class="a" style="left:1432px;top:293.43px;width:1px;height:15.77px;background:#e0e0e4;"></div><div class="t" style="left:1307.5px;top:296.86px;font-size:9.101123595505618px;color:#111;transform:scaleX(0.890);transform-origin:0 0;-webkit-text-stroke:0.255px #111;">Elevation cha...</div><div class="t" style="left:1373px;top:296.86px;font-size:9.101123595505618px;color:#111;transform:scaleX(0.890);transform-origin:0 0;-webkit-text-stroke:0.255px #111;">-3.000</div><div class="t" style="left:1435.5px;top:296.86px;font-size:9.101123595505618px;color:#111;transform:scaleX(0.890);transform-origin:0 0;-webkit-text-stroke:0.255px #111;">m</div><div class="a" style="left:1301px;top:316.5px;width:161px;height:19.5px;background:linear-gradient(180deg,#e8e9ee,#d5d6dd);"></div><div class="a" style="left:1370px;top:316.5px;width:1px;height:19.5px;background:#c5c6cc;"></div><div class="a" style="left:1432px;top:316.5px;width:1px;height:19.5px;background:#c5c6cc;"></div><div class="t" style="left:1305px;top:321.79px;font-size:9.101123595505618px;color:#111;transform:scaleX(0.890);transform-origin:0 0;-webkit-text-stroke:0.255px #111;">Results</div><div class="a" style="left:1301px;top:336.0px;width:161px;height:15.77px;background:#f8f8fa;border-bottom:1px solid #e3e3e7;box-sizing:border-box;"></div><div class="a" style="left:1370px;top:336.0px;width:1px;height:15.77px;background:#e0e0e4;"></div><div class="a" style="left:1432px;top:336.0px;width:1px;height:15.77px;background:#e0e0e4;"></div><div class="t" style="left:1307.5px;top:339.43px;font-size:9.101123595505618px;color:#111;transform:scaleX(0.890);transform-origin:0 0;-webkit-text-stroke:0.255px #111;">Flowrate</div><div class="t" style="left:1373px;top:339.43px;font-size:9.101123595505618px;color:#111;transform:scaleX(0.890);transform-origin:0 0;-webkit-text-stroke:0.255px #111;">80.00</div><div class="t" style="left:1435.5px;top:339.43px;font-size:9.101123595505618px;color:#111;transform:scaleX(0.890);transform-origin:0 0;-webkit-text-stroke:0.255px #111;">m³/h</div><div class="a" style="left:1301px;top:351.77px;width:161px;height:15.77px;background:#f8f8fa;border-bottom:1px solid #e3e3e7;box-sizing:border-box;"></div><div class="a" style="left:1370px;top:351.77px;width:1px;height:15.77px;background:#e0e0e4;"></div><div class="a" style="left:1432px;top:351.77px;width:1px;height:15.77px;background:#e0e0e4;"></div><div class="t" style="left:1307.5px;top:355.20px;font-size:9.101123595505618px;color:#111;transform:scaleX(0.890);transform-origin:0 0;-webkit-text-stroke:0.255px #111;">Pressure drop</div><div class="t" style="left:1373px;top:355.20px;font-size:9.101123595505618px;color:#111;transform:scaleX(0.890);transform-origin:0 0;-webkit-text-stroke:0.255px #111;">&lt;empty&gt;</div><div class="t" style="left:1435.5px;top:355.20px;font-size:9.101123595505618px;color:#111;transform:scaleX(0.890);transform-origin:0 0;-webkit-text-stroke:0.255px #111;">bar</div><div class="a" style="left:1301px;top:367.54px;width:161px;height:15.77px;background:#f8f8fa;border-bottom:1px solid #e3e3e7;box-sizing:border-box;"></div><div class="a" style="left:1370px;top:367.54px;width:1px;height:15.77px;background:#e0e0e4;"></div><div class="a" style="left:1432px;top:367.54px;width:1px;height:15.77px;background:#e0e0e4;"></div><div class="t" style="left:1307.5px;top:370.97px;font-size:9.101123595505618px;color:#111;transform:scaleX(0.890);transform-origin:0 0;-webkit-text-stroke:0.255px #111;">Static head loss</div><div class="t" style="left:1373px;top:370.97px;font-size:9.101123595505618px;color:#111;transform:scaleX(0.890);transform-origin:0 0;-webkit-text-stroke:0.255px #111;">&lt;empty&gt;</div><div class="t" style="left:1435.5px;top:370.97px;font-size:9.101123595505618px;color:#111;transform:scaleX(0.890);transform-origin:0 0;-webkit-text-stroke:0.255px #111;">bar</div><div class="a" style="left:1301px;top:383.31px;width:161px;height:15.77px;background:#f8f8fa;border-bottom:1px solid #e3e3e7;box-sizing:border-box;"></div><div class="a" style="left:1370px;top:383.31px;width:1px;height:15.77px;background:#e0e0e4;"></div><div class="a" style="left:1432px;top:383.31px;width:1px;height:15.77px;background:#e0e0e4;"></div><div class="t" style="left:1307.5px;top:386.74px;font-size:9.101123595505618px;color:#111;transform:scaleX(0.890);transform-origin:0 0;-webkit-text-stroke:0.255px #111;">Friction loss</div><div class="t" style="left:1373px;top:386.74px;font-size:9.101123595505618px;color:#111;transform:scaleX(0.890);transform-origin:0 0;-webkit-text-stroke:0.255px #111;">&lt;empty&gt;</div><div class="t" style="left:1435.5px;top:386.74px;font-size:9.101123595505618px;color:#111;transform:scaleX(0.890);transform-origin:0 0;-webkit-text-stroke:0.255px #111;">bar</div><div class="a" style="left:1301px;top:399.08px;width:161px;height:15.77px;background:#f8f8fa;border-bottom:1px solid #e3e3e7;box-sizing:border-box;"></div><div class="a" style="left:1370px;top:399.08px;width:1px;height:15.77px;background:#e0e0e4;"></div><div class="a" style="left:1432px;top:399.08px;width:1px;height:15.77px;background:#e0e0e4;"></div><div class="t" style="left:1307.5px;top:402.51px;font-size:9.101123595505618px;color:#111;transform:scaleX(0.890);transform-origin:0 0;-webkit-text-stroke:0.255px #111;">Eq Length</div><div class="t" style="left:1373px;top:402.51px;font-size:9.101123595505618px;color:#111;transform:scaleX(0.890);transform-origin:0 0;-webkit-text-stroke:0.255px #111;">&lt;empty&gt;</div><div class="t" style="left:1435.5px;top:402.51px;font-size:9.101123595505618px;color:#111;transform:scaleX(0.890);transform-origin:0 0;-webkit-text-stroke:0.255px #111;">m</div><div class="a" style="left:1301px;top:414.85px;width:161px;height:15.77px;background:#f8f8fa;border-bottom:1px solid #e3e3e7;box-sizing:border-box;"></div><div class="a" style="left:1370px;top:414.85px;width:1px;height:15.77px;background:#e0e0e4;"></div><div class="a" style="left:1432px;top:414.85px;width:1px;height:15.77px;background:#e0e0e4;"></div><div class="t" style="left:1307.5px;top:418.28px;font-size:9.101123595505618px;color:#111;transform:scaleX(0.890);transform-origin:0 0;-webkit-text-stroke:0.255px #111;">Velocity</div><div class="t" style="left:1373px;top:418.28px;font-size:9.101123595505618px;color:#111;transform:scaleX(0.890);transform-origin:0 0;-webkit-text-stroke:0.255px #111;">0</div><div class="t" style="left:1435.5px;top:418.28px;font-size:9.101123595505618px;color:#111;transform:scaleX(0.890);transform-origin:0 0;-webkit-text-stroke:0.255px #111;">m/s</div><div class="a" style="left:1301px;top:430.62px;width:161px;height:15.77px;background:#f8f8fa;border-bottom:1px solid #e3e3e7;box-sizing:border-box;"></div><div class="a" style="left:1370px;top:430.62px;width:1px;height:15.77px;background:#e0e0e4;"></div><div class="a" style="left:1432px;top:430.62px;width:1px;height:15.77px;background:#e0e0e4;"></div><div class="t" style="left:1307.5px;top:434.05px;font-size:9.101123595505618px;color:#111;transform:scaleX(0.890);transform-origin:0 0;-webkit-text-stroke:0.255px #111;">Friction factor</div><div class="t" style="left:1373px;top:434.05px;font-size:9.101123595505618px;color:#111;transform:scaleX(0.890);transform-origin:0 0;-webkit-text-stroke:0.255px #111;">0</div><div class="t" style="left:1435.5px;top:434.05px;font-size:9.101123595505618px;color:#111;transform:scaleX(0.890);transform-origin:0 0;-webkit-text-stroke:0.255px #111;"></div><div class="a" style="left:1301px;top:446.39px;width:161px;height:15.77px;background:#f8f8fa;border-bottom:1px solid #e3e3e7;box-sizing:border-box;"></div><div class="a" style="left:1370px;top:446.39px;width:1px;height:15.77px;background:#e0e0e4;"></div><div class="a" style="left:1432px;top:446.39px;width:1px;height:15.77px;background:#e0e0e4;"></div><div class="t" style="left:1307.5px;top:449.82px;font-size:9.101123595505618px;color:#111;transform:scaleX(0.890);transform-origin:0 0;-webkit-text-stroke:0.255px #111;">Friction loss/le...</div><div class="t" style="left:1373px;top:449.82px;font-size:9.101123595505618px;color:#111;transform:scaleX(0.890);transform-origin:0 0;-webkit-text-stroke:0.255px #111;">&lt;empty&gt;</div><div class="t" style="left:1435.5px;top:449.82px;font-size:9.101123595505618px;color:#111;transform:scaleX(0.890);transform-origin:0 0;-webkit-text-stroke:0.255px #111;">bar/m</div><div class="a" style="left:1301px;top:462.15999999999997px;width:161px;height:15.77px;background:#f8f8fa;border-bottom:1px solid #e3e3e7;box-sizing:border-box;"></div><div class="a" style="left:1370px;top:462.15999999999997px;width:1px;height:15.77px;background:#e0e0e4;"></div><div class="a" style="left:1432px;top:462.15999999999997px;width:1px;height:15.77px;background:#e0e0e4;"></div><div class="t" style="left:1307.5px;top:465.59px;font-size:9.101123595505618px;color:#111;transform:scaleX(0.890);transform-origin:0 0;-webkit-text-stroke:0.255px #111;">Momentum</div><div class="t" style="left:1373px;top:465.59px;font-size:9.101123595505618px;color:#111;transform:scaleX(0.890);transform-origin:0 0;-webkit-text-stroke:0.255px #111;">&lt;empty&gt;</div><div class="t" style="left:1435.5px;top:465.59px;font-size:9.101123595505618px;color:#111;transform:scaleX(0.890);transform-origin:0 0;-webkit-text-stroke:0.255px #111;">Pa</div><div class="a" style="left:1301px;top:477.93px;width:161px;height:15.77px;background:#f8f8fa;border-bottom:1px solid #e3e3e7;box-sizing:border-box;"></div><div class="a" style="left:1370px;top:477.93px;width:1px;height:15.77px;background:#e0e0e4;"></div><div class="a" style="left:1432px;top:477.93px;width:1px;height:15.77px;background:#e0e0e4;"></div><div class="t" style="left:1307.5px;top:481.36px;font-size:9.101123595505618px;color:#111;transform:scaleX(0.890);transform-origin:0 0;-webkit-text-stroke:0.255px #111;">K Value</div><div class="t" style="left:1373px;top:481.36px;font-size:9.101123595505618px;color:#111;transform:scaleX(0.890);transform-origin:0 0;-webkit-text-stroke:0.255px #111;">&lt;empty&gt;</div><div class="t" style="left:1435.5px;top:481.36px;font-size:9.101123595505618px;color:#111;transform:scaleX(0.890);transform-origin:0 0;-webkit-text-stroke:0.255px #111;"></div><div class="a" style="left:1299px;top:536px;width:163px;height:1px;background:#c9cacd;"></div><div class="a" style="left:1299px;top:537px;width:163px;height:1px;background:#f2f2f2;"></div><div class="a" style="left:1301px;top:538px;width:161px;height:111px;background:#dcdce6;"></div><svg class="a" style="left:0px;top:0px;overflow:visible" width="1920" height="851" viewBox="0 0 1920 851"><path d="M1351.5,546 L1406,546 L1406,580.6 L1462,580.6" stroke="#333" stroke-width="0.7" fill="none"/><path d="M1351.5,546 L1351.5,644.5 L1406,644.5 L1406,607.7 L1462,607.7" stroke="#333" stroke-width="0.7" fill="none"/><path d="M1324,573 L1324,626" stroke="#333" stroke-width="0.7" fill="none"/><path d="M1324,573 L1344,573 L1344,568 L1351.5,568" stroke="#333" stroke-width="0.7" fill="none"/><path d="M1324,586 L1344,586 L1344,580.6 L1351.5,580.6" stroke="#333" stroke-width="0.7" fill="none"/><path d="M1324,602 L1344,602 L1344,596.6 L1351.5,596.6" stroke="#333" stroke-width="0.7" fill="none"/><path d="M1324,613.4 L1344,613.4 L1344,607.7 L1351.5,607.7" stroke="#333" stroke-width="0.7" fill="none"/><path d="M1324,626 L1344,626 L1344,620.4 L1351.5,620.4" stroke="#333" stroke-width="0.7" fill="none"/><path d="M1305,594 L1305,602 L1324,602" stroke="#333" stroke-width="0.7" fill="none"/><path d="M1364,594.4 L1375,594.4 L1375,586.4 L1391.5,586.4 L1391.5,602.4 L1375,602.4 L1375,594.4" stroke="#333" stroke-width="0.7" fill="none"/><path d="M1391.5,594.4 L1411,594.4 L1411,586.4 L1427.5,586.4 L1427.5,580.6" stroke="#333" stroke-width="0.7" fill="none"/><path d="M1411,594.4 L1411,602.4 L1427.5,602.4 L1427.5,607.7" stroke="#333" stroke-width="0.7" fill="none"/><path d="M1396.5,595 V615" stroke="#777" stroke-width="0.6"/></svg><div class="a" style="left:1299px;top:649px;width:163px;height:19px;background:#f8f8fa;"></div><div class="a" style="left:1462px;top:65px;width:4.5px;height:11px;background:#f4f3f1;"></div><div class="a" style="left:1462px;top:76px;width:4.5px;height:5px;background:#e0e0e0;"></div><div class="a" style="left:1462px;top:81px;width:4.5px;height:24px;background:#02020d;"></div><div class="a" style="left:1462px;top:105px;width:4.5px;height:12px;background:#fdfdfe;"></div><div class="a" style="left:1462px;top:117px;width:4.5px;height:13px;background:#e1e2e3;"></div><div class="a" style="left:1462px;top:130px;width:4.5px;height:38px;background:#f4f4f5;"></div><div class="a" style="left:1462px;top:168px;width:4.5px;height:352px;background:#f6f6f7;"></div><div class="a" style="left:1462px;top:520px;width:4.5px;height:80px;background:#d9d9e1;"></div><div class="a" style="left:1462px;top:600px;width:4.5px;height:28px;background:#f0f0f2;"></div><div class="a" style="left:1462px;top:628px;width:4.5px;height:25px;background:#02020d;"></div><div class="a" style="left:1462px;top:653px;width:4.5px;height:15px;background:#e0e0e0;"></div>
</div></div>

</body></html>
